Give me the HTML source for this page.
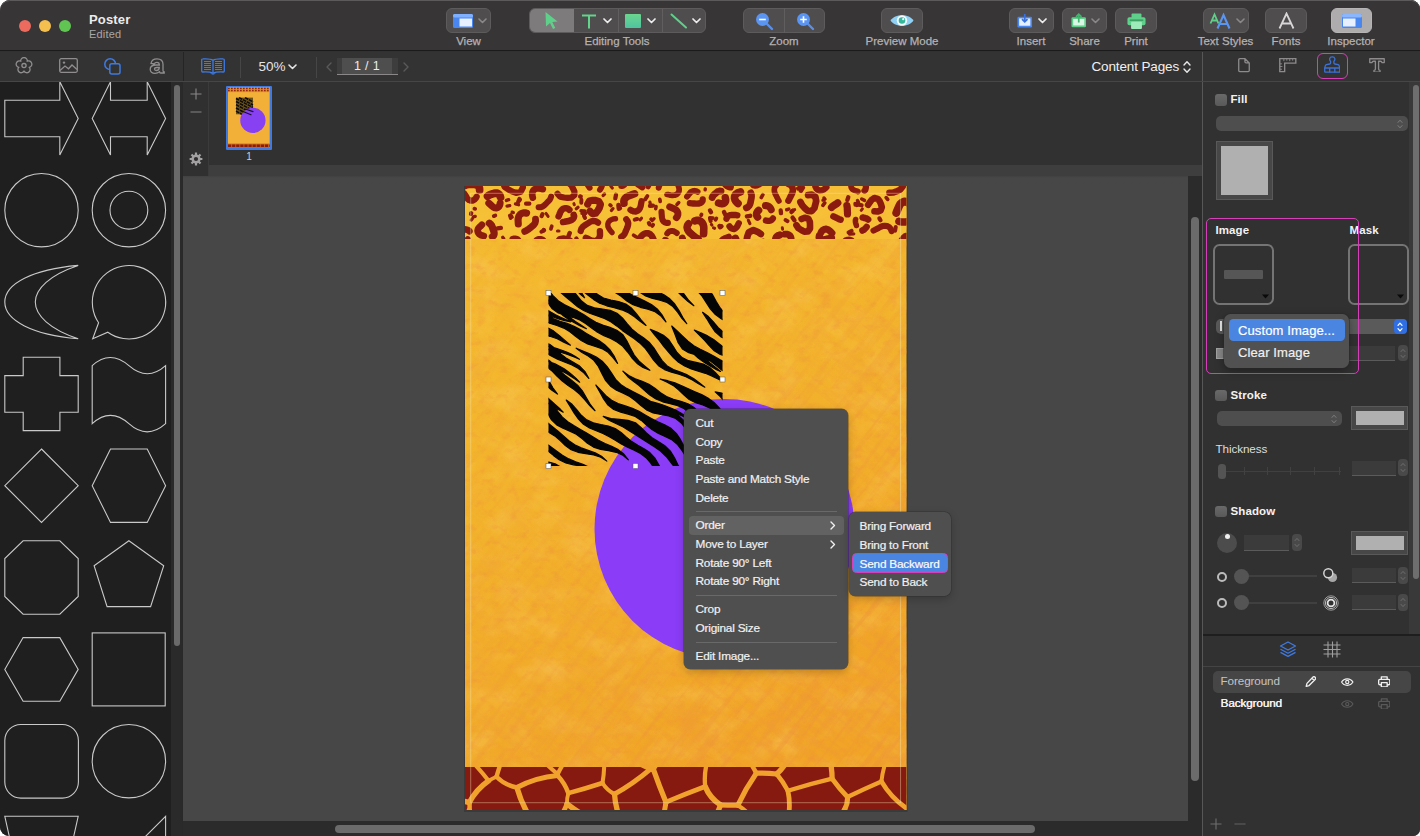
<!DOCTYPE html>
<html><head><meta charset="utf-8"><title>Poster</title>
<style>
*{box-sizing:border-box;margin:0;padding:0}
html,body{width:1420px;height:836px;overflow:hidden;background:#fff;font-family:"Liberation Sans",sans-serif;}
#win{position:absolute;left:0;top:0;width:1420px;height:836px;background:#323132;border-radius:10px 9px 7px 9px;overflow:hidden;}
#win:after{content:"";position:absolute;left:0;top:0;right:0;bottom:0;border-radius:10px 9px 7px 9px;box-shadow:inset 0 1px 0 0 #5c5a5b;pointer-events:none}
.abs{position:absolute}
/* title bar */
#title{position:absolute;left:0;top:0;width:1420px;height:51px;background:#373536;border-bottom:1px solid #1c1b1c}
.tl{position:absolute;top:19.5px;width:12px;height:12px;border-radius:50%}
.tbtn{position:absolute;top:8px;height:25px;background:#4f4d4e;border-radius:6px;border:1px solid #5d5b5c}
.tlabel{position:absolute;top:35px;font-size:11.5px;color:#b4b2b3;text-align:center;white-space:nowrap;transform:translateX(-50%);-webkit-text-stroke:.25px #b4b2b3}
/* second row */
#row2{position:absolute;left:0;top:52px;width:1420px;height:30px;background:#343334;border-bottom:1px solid #474647}
</style></head><body>
<div id="win">
<div id="title">
  <div class="tl" style="left:19px;background:#ec6a5e"></div>
  <div class="tl" style="left:39px;background:#f4bf4f"></div>
  <div class="tl" style="left:59px;background:#61c554"></div>
  <div class="abs" style="left:89px;top:11.6px;font-size:13px;font-weight:bold;color:#ececec;letter-spacing:.15px">Poster</div>
  <div class="abs" style="left:89px;top:28px;font-size:11px;color:#a9a7a8;letter-spacing:.2px">Edited</div>

  <!-- View -->
  <div class="tbtn" style="left:446px;width:45px">
    <svg class="abs" style="left:6px;top:5px" width="20" height="14" viewBox="0 0 20 14"><rect x="0" y="0" width="20" height="14" rx="1.5" fill="#4a86f0"/><rect x="0" y="0" width="20" height="3.5" rx="1.5" fill="#7fb0ff"/><rect x="6.5" y="4.5" width="12.5" height="8" fill="#e8f0ff"/></svg>
    <svg class="abs" style="left:31px;top:9px" width="9" height="6" viewBox="0 0 9 6"><path d="M1 1l3.5 3.5L8 1" fill="none" stroke="#8a8889" stroke-width="1.6" stroke-linecap="round" stroke-linejoin="round"/></svg>
  </div>
  <div class="tlabel" style="left:468.5px">View</div>

  <!-- Editing tools -->
  <div class="tbtn" style="left:529px;width:177px;overflow:hidden">
    <div class="abs" style="left:-1px;top:-1px;width:45px;height:25px;background:#7d7b7c;border-radius:6px 0 0 6px"></div>
    <div class="abs" style="left:88px;top:-1px;width:1px;height:25px;background:#605e5f"></div>
    <div class="abs" style="left:132px;top:-1px;width:1px;height:25px;background:#605e5f"></div>
    <svg class="abs" style="left:14px;top:2px" width="16" height="19" viewBox="0 0 16 19"><path d="M1.5 1 L13.5 10.5 L8.3 11 L11.3 17 L9 18 L6 12 L2 15.5 Z" fill="#5fd08a"/></svg>
    <svg class="abs" style="left:51px;top:5px" width="16" height="15" viewBox="0 0 16 15"><path d="M1 1.5h14M8 1.5v13" fill="none" stroke="#62d48c" stroke-width="2"/></svg>
    <svg class="abs" style="left:73px;top:9px" width="9" height="6" viewBox="0 0 9 6"><path d="M1 1l3.5 3.5L8 1" fill="none" stroke="#eeeeee" stroke-width="1.7" stroke-linecap="round" stroke-linejoin="round"/></svg>
    <div class="abs" style="left:95px;top:5px;width:16px;height:14px;background:linear-gradient(#6bd68f,#4fc3a0);border-radius:1px"></div>
    <svg class="abs" style="left:117px;top:9px" width="9" height="6" viewBox="0 0 9 6"><path d="M1 1l3.5 3.5L8 1" fill="none" stroke="#eeeeee" stroke-width="1.7" stroke-linecap="round" stroke-linejoin="round"/></svg>
    <svg class="abs" style="left:140px;top:4px" width="18" height="16" viewBox="0 0 18 16"><path d="M1.5 1.5L16 14.5" fill="none" stroke="#5fd08a" stroke-width="2" stroke-linecap="round"/></svg>
    <svg class="abs" style="left:162px;top:9px" width="9" height="6" viewBox="0 0 9 6"><path d="M1 1l3.5 3.5L8 1" fill="none" stroke="#eeeeee" stroke-width="1.7" stroke-linecap="round" stroke-linejoin="round"/></svg>
  </div>
  <div class="tlabel" style="left:617px">Editing Tools</div>

  <!-- Zoom -->
  <div class="tbtn" style="left:743px;width:82px">
    <div class="abs" style="left:40px;top:-1px;width:1px;height:25px;background:#605e5f"></div>
    <svg class="abs" style="left:11px;top:3px" width="19" height="19" viewBox="0 0 19 19"><path d="M11 11L17 17" stroke="#5b8fe8" stroke-width="2.4" stroke-linecap="round"/><circle cx="7.5" cy="7.5" r="6.5" fill="#5b95f2"/><path d="M4.2 7.5h6.6" stroke="#fff" stroke-width="1.6"/></svg>
    <svg class="abs" style="left:52px;top:3px" width="19" height="19" viewBox="0 0 19 19"><path d="M11 11L17 17" stroke="#5b8fe8" stroke-width="2.4" stroke-linecap="round"/><circle cx="7.5" cy="7.5" r="6.5" fill="#5b95f2"/><path d="M4.2 7.5h6.6M7.5 4.2v6.6" stroke="#fff" stroke-width="1.6"/></svg>
  </div>
  <div class="tlabel" style="left:784px">Zoom</div>

  <!-- Preview -->
  <div class="tbtn" style="left:881px;width:42px">
    <svg class="abs" style="left:8px;top:4px" width="24" height="15" viewBox="0 0 24 15"><path d="M0.5 7.5C5 0.5 19 0.5 23.5 7.5C19 14.5 5 14.5 0.5 7.5Z" fill="#8fd0f5"/><circle cx="12" cy="7.5" r="5.2" fill="#f4fbff"/><circle cx="12" cy="7.5" r="3.3" fill="#35b59a"/><circle cx="13.2" cy="6.2" r="1.1" fill="#f4fbff"/></svg>
  </div>
  <div class="tlabel" style="left:902px">Preview Mode</div>

  <!-- Insert -->
  <div class="tbtn" style="left:1009px;width:45px">
    <svg class="abs" style="left:7px;top:4.5px" width="15.5" height="14" viewBox="0 0 18 16"><rect x="0.5" y="3" width="17" height="12.5" rx="1.5" fill="#4a86f0"/><rect x="2.5" y="5" width="13" height="8.5" fill="#e4eeff"/><path d="M9 0v8M5.8 5.8L9 9l3.2-3.2" fill="none" stroke="#3a6fe0" stroke-width="2"/></svg>
    <svg class="abs" style="left:27.5px;top:9px" width="9" height="6" viewBox="0 0 9 6"><path d="M1 1l3.5 3.5L8 1" fill="none" stroke="#eeeeee" stroke-width="1.7" stroke-linecap="round" stroke-linejoin="round"/></svg>
  </div>
  <div class="tlabel" style="left:1031px">Insert</div>

  <!-- Share -->
  <div class="tbtn" style="left:1062px;width:45px">
    <svg class="abs" style="left:7.5px;top:4px" width="15.5" height="14.6" viewBox="0 0 18 17"><rect x="0.5" y="5" width="17" height="11.5" rx="1.5" fill="#5fd08a"/><rect x="2.5" y="7" width="13" height="7.5" fill="#d9f7e4"/><path d="M9 11V2M5.8 4.6L9 1.4l3.2 3.2" fill="none" stroke="#3fb56e" stroke-width="2"/></svg>
    <svg class="abs" style="left:27.5px;top:9px" width="9" height="6" viewBox="0 0 9 6"><path d="M1 1l3.5 3.5L8 1" fill="none" stroke="#8a8889" stroke-width="1.6" stroke-linecap="round" stroke-linejoin="round"/></svg>
  </div>
  <div class="tlabel" style="left:1084.5px">Share</div>

  <!-- Print -->
  <div class="tbtn" style="left:1115px;width:42px">
    <svg class="abs" style="left:11px;top:3.5px" width="19" height="16.5" viewBox="0 0 21 18"><rect x="5" y="0.5" width="11" height="5" rx="1" fill="#5fd08a"/><rect x="0.5" y="4.5" width="20" height="9" rx="2" fill="#5fd08a"/><rect x="4.5" y="9.5" width="12" height="8" rx="1" fill="#9cebb8"/><rect x="3" y="7" width="15" height="1.6" fill="#3a9d60"/></svg>
  </div>
  <div class="tlabel" style="left:1136px">Print</div>

  <!-- Text styles -->
  <div class="tbtn" style="left:1203px;width:46px">
    <svg class="abs" style="left:5px;top:3px" width="24" height="18" viewBox="0 0 24 18"><path d="M1.5 11.5L5.5 2.5L9.5 11.5M3 8.5h5" fill="none" stroke="#5fd08a" stroke-width="1.8"/><path d="M8.5 16.5L14.5 3L20.5 16.5M10.8 12h7.4" fill="none" stroke="#5b95f2" stroke-width="2.1"/></svg>
    <svg class="abs" style="left:32px;top:9px" width="9" height="6" viewBox="0 0 9 6"><path d="M1 1l3.5 3.5L8 1" fill="none" stroke="#8a8889" stroke-width="1.6" stroke-linecap="round" stroke-linejoin="round"/></svg>
  </div>
  <div class="tlabel" style="left:1225.5px">Text Styles</div>

  <!-- Fonts -->
  <div class="tbtn" style="left:1265px;width:42px">
    <svg class="abs" style="left:12px;top:3px" width="17" height="18" viewBox="0 0 17 18"><path d="M1.5 16.5L8.5 1.5L15.5 16.5M4 11.5h9" fill="none" stroke="#d8d6d7" stroke-width="1.8"/></svg>
  </div>
  <div class="tlabel" style="left:1286px">Fonts</div>

  <!-- Inspector -->
  <div class="tbtn" style="left:1331px;width:41px;background:#aeacad;border-color:#b6b4b5">
    <svg class="abs" style="left:10px;top:5px" width="20" height="14" viewBox="0 0 20 14"><rect x="0" y="0" width="20" height="14" rx="1.5" fill="#4a86f0"/><rect x="0" y="0" width="20" height="3.5" rx="1.5" fill="#8ab6ff"/><rect x="1" y="4.5" width="12.5" height="8" fill="#e8f0ff"/></svg>
  </div>
  <div class="tlabel" style="left:1351px">Inspector</div>
</div>

<div id="row2">
  <!-- left tabs -->
  <svg class="abs" style="left:15px;top:5px" width="18" height="17" viewBox="0 0 18 17"><g fill="none" stroke="#8f8d8e" stroke-width="1.3"><path d="M5.71 4.07A3.3 3.3 0 1 1 12.29 4.07A3.3 3.3 0 1 1 14.33 10.33A3.3 3.3 0 1 1 9.00 14.20A3.3 3.3 0 1 1 3.67 10.33A3.3 3.3 0 1 1 5.71 4.07Z"/><circle cx="9" cy="8.6" r="2.1"/></g></svg>
  <svg class="abs" style="left:59px;top:6px" width="19" height="15" viewBox="0 0 19 15"><g fill="none" stroke="#8f8d8e" stroke-width="1.3"><rect x=".7" y=".7" width="17.6" height="13.6" rx="1.5"/><path d="M1 12.5l5-4.5 3.5 2.8 3.5-3.8 5 4.5"/><circle cx="5" cy="4.6" r="1.2" fill="#8f8d8e" stroke="none"/></g></svg>
  <svg class="abs" style="left:104px;top:6px" width="17" height="17" viewBox="0 0 17 17"><g fill="none" stroke="#3f7ae0" stroke-width="1.5"><circle cx="6.2" cy="6.2" r="5.4"/><rect x="5.8" y="5.8" width="10.2" height="10.2" rx="2" fill="#343334"/></g></svg>
  <svg class="abs" style="left:149px;top:6px" width="16" height="16" viewBox="0 0 16 16"><g fill="none" stroke="#8f8d8e" stroke-width="1.3"><path d="M2 5.5C2.5 2 5 .8 8 .8c4 0 6 2 6 5.500000000000001V12.5c0 1.2 .5 1.500000000000001 1.2 1.500000000000001V15h-3.5c-.8 0 -1.2 -.5 -1.2 -1.200000000000001C9 15 7.5 15.300000000000001 6 15.300000000000001c-3 0 -4.8 -1.500000000000001 -4.8 -4c0 -3 2.5 -4.300000000000001 6 -4.300000000000001h3.200000000000001c0 -2 -1 -2.7 -2.500000000000001 -2.7c-1.5 0 -2.300000000000001 .6 -2.500000000000001 1.700000000000001Z"/><path d="M10.3 9.5H8c-1.500000000000001 0 -2.500000000000001 .5 -2.500000000000001 1.500000000000001s.8 1.500000000000001 1.800000000000001 1.500000000000001c1.800000000000001 0 3 -1 3 -3Z"/></g></svg>
  <div class="abs" style="left:183px;top:0;width:1px;height:29px;background:#262526"></div>
  <!-- book icon -->
  <svg class="abs" style="left:201px;top:6px" width="24" height="17" viewBox="0 0 24 17"><g fill="none" stroke="#3f7ae0" stroke-width="1.3"><path d="M12 2.2C10 .9 5 .7 1.700000000000001 .9C1 .9 .7 1.2 .7 1.9V13c0 .6 .4 1 1 1c3.500000000000001 -.2 7.300000000000001 -.2 10.3 1.2c3 -1.400000000000001 6.800000000000001 -1.400000000000001 10.3 -1.2c.6 0 1 -.4 1 -1V1.9c0 -.7 -.3 -1 -1 -1C19 .7 14 .9 12 2.2Z"/><path d="M12 2.2V15"/></g><g stroke="#3f7ae0" stroke-width="1"><path d="M3 3.5h7M3 5.5h7M3 7.5h7M3 9.5h7M3 11.5h7M14 3.5h7M14 5.5h7M14 7.5h7M14 9.5h7M14 11.5h7"/></g><path d="M9 15.600000000000001h6l-3 1.2z" fill="#3f7ae0"/></svg>
  <div class="abs" style="left:240px;top:5px;width:1px;height:21px;background:#474647"></div>
  <div class="abs" style="left:258.5px;top:7px;font-size:13.5px;color:#e6e6e6;letter-spacing:0">50%</div>
  <svg class="abs" style="left:288px;top:12px" width="9" height="6" viewBox="0 0 9 6"><path d="M1 1l3.5 3.5L8 1" fill="none" stroke="#e6e6e6" stroke-width="1.6" stroke-linecap="round" stroke-linejoin="round"/></svg>
  <div class="abs" style="left:316px;top:5px;width:1px;height:21px;background:#474647"></div>
  <svg class="abs" style="left:326px;top:10px" width="6" height="10" viewBox="0 0 6 10"><path d="M5 1L1 5l4 4" fill="none" stroke="#5a5859" stroke-width="1.4" stroke-linecap="round" stroke-linejoin="round"/></svg>
  <div class="abs" style="left:337px;top:6px;width:61px;height:17px;background:#3e3d3e;border-bottom:1px solid #8a8889"></div>
  <div class="abs" style="left:342px;top:6px;width:50px;height:16px;background:#4f4e4f;color:#ececec;font-size:12.5px;text-align:center;line-height:17px;letter-spacing:.3px">1 / 1</div>
  <svg class="abs" style="left:403px;top:10px" width="6" height="10" viewBox="0 0 6 10"><path d="M1 1l4 4-4 4" fill="none" stroke="#5a5859" stroke-width="1.4" stroke-linecap="round" stroke-linejoin="round"/></svg>

  <div class="abs" style="left:1091.5px;top:6.5px;font-size:13.5px;color:#f0f0f0;letter-spacing:-.14px">Content Pages</div>
  <svg class="abs" style="left:1182.5px;top:8px" width="8" height="14" viewBox="0 0 8 14"><path d="M1 5l3-3.2L7 5M1 9l3 3.2L7 9" fill="none" stroke="#e8e8e8" stroke-width="1.4" stroke-linecap="round" stroke-linejoin="round"/></svg>

  <div class="abs" style="left:1202px;top:0;width:1px;height:29px;background:#585758"></div>
  <!-- inspector tabs -->
  <svg class="abs" style="left:1237.5px;top:6.2px" width="12" height="14.4" viewBox="0 0 13 16" preserveAspectRatio="none"><path d="M2 .8h5.5l4.7 4.7V14c0 .7 -.5 1.2 -1.2 1.2H2c-.7 0 -1.2 -.5 -1.2 -1.2V2c0 -.7 .5 -1.2 1.2 -1.2Z M7.5 .8v3.5c0 .7 .5 1.2 1.2 1.2h3.5" fill="none" stroke="#8d8b8c" stroke-width="1.4"/></svg>
  <svg class="abs" style="left:1279px;top:6.2px" width="17.6" height="14.4" viewBox="0 0 18 16" preserveAspectRatio="none"><path d="M.8 .8h16.4v5h-11.4v9.4h-5Z" fill="none" stroke="#8d8b8c" stroke-width="1.4"/><path d="M5 1v2.5M8 1v2M11 1v2.5M14 1v2M1 6.5h2M1 9.5h2.5M1 12.5h2" stroke="#8d8b8c" stroke-width="1"/></svg>
  <div class="abs" style="left:1316.5px;top:.5px;width:31.5px;height:26.5px;border:1.5px solid #d63fb9;border-radius:6px"></div>
  <svg class="abs" style="left:1323.8px;top:4.3px" width="16.5" height="17" viewBox="0 0 16.5 17"><g fill="none" stroke="#3b72d6" stroke-width="1.3" stroke-linejoin="round"><path d="M6.6 5.2C5.2 4.3 5 .8 8.25 .8S11.3 4.3 9.9 5.2V7c0 .6 .3 .9 .9 1l3.2 .7c.7 .2 1 .5 1.200000000000001 1.2L15.8 12H.7l.6-2.100000000000001c.2-.7 .5-1 1.200000000000001-1.2L5.7 8c.6-.1 .9-.4 .9-1Z"/><path d="M.7 12v3.6c0 .4 .2 .6 .6 .6h13.9c.4 0 .6-.2 .6-.6V12"/><path d="M5.7 12v4.2M10.8 12v4.2"/></g></svg>
  <svg class="abs" style="left:1368.9px;top:5.7px" width="16" height="14.8" viewBox="0 0 17 16" preserveAspectRatio="none"><path d="M.8 .8h15.4v4.2h-2.5c0 -1 -.5 -1.5 -1.5 -1.5h-2v8.7c0 .8 .5 1.2 1.5 1.2v1.8h-6.4v-1.8c1 0 1.5 -.4 1.5 -1.2V3.5h-2c-1 0 -1.5 .5 -1.5 1.5H.8Z" fill="none" stroke="#8d8b8c" stroke-width="1.4" stroke-linejoin="round"/></svg>
</div>

<div class="abs" style="left:0;top:82px;width:183px;height:754px;background:#201f20;overflow:hidden">
<svg class="abs" style="left:0;top:0" width="171" height="754" viewBox="0 82 171 754"><g fill="none" stroke="#c9c9c9" stroke-width="1.1" stroke-linejoin="miter"><path transform="translate(4.8 81.7)" d="M0,18.5H55V0L73.4,36.7L55,73.4V55H0Z" /><path transform="translate(92.2 81.7)" d="M0,36.7L18.3,0V18.5H55V0L73.4,36.7L55,73.4V55H18.3V73.4Z" /><circle cx="41.5" cy="210.2" r="36.7"/><circle cx="128.9" cy="210.2" r="36.7"/><circle cx="128.9" cy="210.2" r="18.9"/><path transform="translate(4.8 265.4)" d="M73.4,0C28,4 0,18 0,36.7C0,55.4 28,69.4 73.4,73.4C45,64 30.5,50 30.5,36.7C30.5,23.4 45,9.4 73.4,0Z" /><path transform="translate(92.2 265.4)" d="M6.4,57.4A36.7,36.7 0 1 1 15.6,66.8L0.5,73.4Z" /><path transform="translate(4.8 357.2)" d="M18.4,0H55.1V18.4H73.4V55.1H55.1V73.4H18.4V55.1H0V18.4H18.4Z" /><path transform="translate(92.2 357.2)" d="M0,8.5C12,-2.5 24,-2.5 36.7,8.5S61,19.5 73.4,8.5V66.5C61,77.5 49,77.5 36.7,66.5S12,55.5 0,66.5Z" /><path transform="translate(4.8 449.0)" d="M36.7,0L73.4,36.7L36.7,73.4L0,36.7Z" /><path transform="translate(92.2 449.0)" d="M0,36.7L18.3,0H55L73.4,36.7L55,73.4H18.3Z" /><path transform="translate(4.8 540.8)" d="M18.3,0H55L73.4,17.8V55.6L55,73.4H18.3L0,55.6V17.8Z" /><path transform="translate(92.2 540.8)" d="M36.7,0L71.5,24.9L58.4,65.8H14.9L1.9,24.9Z" /><path transform="translate(4.8 632.7)" d="M0,36.7L18.3,4.9H55L73.4,36.7L55,68.5H18.3Z" /><rect x="92.2" y="632.9" width="73" height="73"/><rect x="4.8" y="724.5" width="73.6" height="73.6" rx="16" ry="16"/><circle cx="128.9" cy="761.2" r="36.7"/><path transform="translate(4.8 816.3)" d="M0,0H73.4L57,73.4H16.4Z" /><path transform="translate(92.2 816.3)" d="M73.4,0V73.4H0Z" /></g></svg>
<div class="abs" style="left:171px;top:0;width:11px;height:754px;background:#2b2a2b"></div>
<div class="abs" style="left:174.3px;top:3px;width:6px;height:561px;background:#6b6a6b;border-radius:3px"></div>
<div class="abs" style="left:182px;top:0;width:1px;height:754px;background:#2a292a"></div>
</div>

<div class="abs" style="left:183px;top:82px;width:1019px;height:94px;background:#323132">
  <div class="abs" style="left:0;top:0;width:26px;height:94px;background:#313031;border-right:1px solid #3c3b3c"></div>
  <svg class="abs" style="left:7px;top:6px" width="12" height="12" viewBox="0 0 12 12"><path d="M6 .5v11M.5 6h11" stroke="#8a8889" stroke-width="1.1"/></svg>
  <svg class="abs" style="left:7px;top:29px" width="12" height="2" viewBox="0 0 12 2"><path d="M.5 1h11" stroke="#858384" stroke-width="1.2"/></svg>
  <svg class="abs" style="left:6px;top:70px" width="14" height="14" viewBox="0 0 14 14"><g fill="#a3a1a2"><circle cx="7" cy="7" r="4.6"/><g stroke="#a3a1a2" stroke-width="2.2"><path d="M7 .6v12.8M.6 7h12.8M2.5 2.5l9 9M11.5 2.5l-9 9"/></g></g><circle cx="7" cy="7" r="2.1" fill="#2f2e2f"/></svg>
  <!-- thumbnail -->
  <div class="abs" style="left:43px;top:3.7px;width:46px;height:64.3px;background:#3f7ae0;border-radius:1px"></div>
  <svg class="abs" style="left:45px;top:5.4px" width="41.7" height="61" viewBox="0 0 41.7 61">
    <rect width="41.7" height="61" fill="#f2b038"/>
    <rect width="41.7" height="5.1" fill="#dc8c2c"/><path d="M0 1.5h41.7M0 3.7h41.7" stroke="#97260f" stroke-width="1.3" stroke-dasharray="1.7 1.3"/>
    <rect y="56.6" width="41.7" height="4.4" fill="#c8661f"/><path d="M0 58.8h41.7" stroke="#8a1c0c" stroke-width="2.6" stroke-dasharray="3.2 .9"/>
    <rect x="8" y="10.6" width="17" height="16.7" fill="#6b5118"/>
    <path d="M8 11.5l17 9M8 14.5l17 9M8 17.700000000000003l17 9M8 21l12 6.3M8 24.2l6 3.1M11 10.6l14 7.4M17 10.6l8 4.2" stroke="#0c0a06" stroke-width="1.5" stroke-dasharray="3.6 .8"/>
    <rect x="0" y="0" width="41.7" height="61" fill="none"/>
    <circle cx="24.9" cy="33.4" r="12.65" fill="#8740f2"/>
    <path d="M15 24.5l8 3.2M18 22.2l7 2.4" stroke="#1a0e30" stroke-width="1.2" stroke-linecap="round"/>
  </svg>
  <div class="abs" style="left:56px;top:69px;width:20px;text-align:center;font-size:10px;color:#cfcdce">1</div>
  <div class="abs" style="left:26px;top:83px;width:993px;height:11px;background:#3f3e3f"></div>
</div>

<div class="abs" style="left:183px;top:176px;width:1019px;height:660px;background:#474747;overflow:hidden"></div>
<div class="abs" style="left:183px;top:176px;width:1019px;height:2px;background:linear-gradient(#414141,#474747)"></div>
<div class="abs" style="left:1188px;top:176px;width:14px;height:660px;background:#2b2b2b"></div>
<div class="abs" style="left:1191px;top:217px;width:8px;height:564px;background:#6b6b6b;border-radius:4px"></div>
<div class="abs" style="left:183px;top:821px;width:1019px;height:15px;background:#2b2b2b"></div>
<div class="abs" style="left:335px;top:825px;width:700px;height:8px;background:#6b6b6b;border-radius:4px"></div>
<svg class="abs" style="left:465px;top:186px;overflow:visible" width="441.5" height="624" viewBox="0 0 441.5 624">
<defs>
<filter id="grain" x="0" y="0" width="100%" height="100%"><feTurbulence type="fractalNoise" baseFrequency="0.03 0.04" numOctaves="5" seed="7"/><feColorMatrix type="matrix" values="0 0 0 0 0.90  0 0 0 0 0.42  0 0 0 0 0.06  2.6 0 0 0 -1.08"/></filter>
<filter id="grain2" x="0" y="0" width="100%" height="100%"><feTurbulence type="fractalNoise" baseFrequency="0.09 0.13" numOctaves="3" seed="21"/><feColorMatrix type="matrix" values="0 0 0 0 0.86  0 0 0 0 0.30  0 0 0 0 0.04  0 3.2 0 0 -1.75"/></filter>
<filter id="grain3" x="0" y="0" width="100%" height="100%"><feTurbulence type="fractalNoise" baseFrequency="0.03 0.04" numOctaves="4" seed="33"/><feColorMatrix type="matrix" values="0 0 0 0 1  0 0 0 0 0.80  0 0 0 0 0.25  0 0 2.4 0 -1.1"/></filter>
<clipPath id="cLeo"><rect x="0" y="0" width="441.5" height="53"/></clipPath>
<clipPath id="cGir"><rect x="0" y="0" width="441.5" height="43"/></clipPath>
<clipPath id="cTig"><rect x="0" y="0" width="174" height="173"/></clipPath>
<clipPath id="cPoster"><rect x="0" y="0" width="441.5" height="624"/></clipPath>
</defs>
<rect x="-1" y="0" width="443.5" height="626" fill="#000" opacity=".18"/>
<linearGradient id="pg" x1="0" y1="0" x2=".35" y2="1"><stop offset="0" stop-color="#f5bc31"/><stop offset=".45" stop-color="#f3b42c"/><stop offset="1" stop-color="#f1a427"/></linearGradient>
<linearGradient id="mg" x1="0" y1="0" x2=".7" y2="1"><stop offset="0" stop-color="#fff" stop-opacity=".15"/><stop offset=".45" stop-color="#fff" stop-opacity=".35"/><stop offset="1" stop-color="#fff" stop-opacity="1"/></linearGradient>
<mask id="mk"><rect x="0" y="0" width="441.5" height="624" fill="url(#mg)"/></mask>
<filter id="scr" x="0" y="0" width="100%" height="100%"><feTurbulence type="fractalNoise" baseFrequency="0.012 0.16" numOctaves="3" seed="5"/><feColorMatrix type="matrix" values="0 0 0 0 0.85  0 0 0 0 0.30  0 0 0 0 0.04  4.6 0 0 0 -2.2"/></filter>
<rect x="0" y="0" width="441.5" height="624" fill="url(#pg)"/>
<rect x="0" y="0" width="441.5" height="624" filter="url(#grain)" opacity=".28"/><rect x="0" y="0" width="441.5" height="624" filter="url(#grain3)" opacity=".2"/><rect x="0" y="0" width="441.5" height="624" filter="url(#grain2)" opacity=".4"/>
<g mask="url(#mk)" clip-path="url(#cPoster)"><g transform="rotate(-52 220 312)"><rect x="-200" y="-200" width="900" height="1100" filter="url(#scr)" opacity=".42"/></g><g transform="rotate(38 220 312)"><rect x="-200" y="-200" width="900" height="1100" filter="url(#scr)" opacity=".22"/></g></g>
<g clip-path="url(#cLeo)"><rect x="0" y="0" width="441.5" height="53" fill="#f7c338" opacity=".75"/><g fill="none" stroke="#8b1a0f" stroke-linecap="round" stroke-linejoin="round"><path d="M108.7 28.8L109.1 30.2L108.8 31.6L107.9 32.9L106.6 33.9L105.1 34.6L103.7 34.9L102.3 35.2L101.0 35.5L99.6 35.8L98.1 36.0" stroke-width="6.6"/><path d="M93.6 30.3L94.2 29.0L94.7 27.8L95.2 26.5L95.8 25.2L96.8 23.9L98.1 22.8L99.8 22.2L101.6 22.3L103.2 22.9L104.4 23.8" stroke-width="6.5"/><path d="M261.5 32.7L262.0 31.3L262.8 30.2L264.0 29.5L265.3 29.1L266.5 29.0L267.6 29.0L268.7 29.0L269.8 28.9L271.0 29.0L272.3 29.3" stroke-width="6.4"/><path d="M273.8 37.2L273.3 38.2L272.8 39.3L272.2 40.4L271.4 41.5L270.3 42.5L269.0 43.0L267.7 42.9L266.4 42.4L265.3 41.4L264.5 40.3" stroke-width="6.3"/><path d="M-1.3 43.0L-0.8 43.2L-0.2 43.3L0.3 43.4L0.9 43.5L1.5 43.6L2.1 43.8L2.7 44.0L3.4 44.3L3.9 44.7L4.4 45.2" stroke-width="6.6"/><path d="M2.8 53.2L2.4 53.7L2.0 54.3L1.5 54.8L1.1 55.4L0.6 55.9L0.1 56.5L-0.5 57.0L-1.2 57.5L-1.9 57.9L-2.7 58.1" stroke-width="6.1"/><path d="M-7.4 53.1L-7.6 52.4L-7.8 51.7L-7.9 51.0L-8.1 50.3L-8.3 49.5L-8.4 48.7L-8.4 47.8L-8.3 46.9L-8.1 46.0L-7.7 45.1" stroke-width="7.0"/><path d="M93.6 67.9L92.6 64.2L92.3 60.8L92.5 57.0L94.9 53.5L98.9 52.8L102.0 53.9L105.1 55.1L107.6 57.9L107.1 62.0L104.3 65.0" stroke-width="7.1"/><path d="M366.6 21.3L367.2 20.7L367.8 20.2L368.5 19.7L369.1 19.3L369.7 18.9L370.3 18.6L370.9 18.2L371.5 17.8L372.1 17.3L372.7 16.9" stroke-width="7.4"/><path d="M381.9 19.6L382.1 20.5L382.2 21.4L382.3 22.3L382.3 23.1L382.3 23.8L382.4 24.6L382.4 25.4L382.5 26.2L382.5 27.0L382.5 27.9" stroke-width="7.2"/><path d="M375.6 33.7L374.7 33.4L373.9 33.1L373.2 32.8L372.5 32.4L371.9 32.1L371.2 31.8L370.5 31.4L369.9 31.1L369.2 30.8L368.4 30.4" stroke-width="6.5"/><path d="M53.3 37.9L53.2 36.4L53.1 35.0L53.1 33.4L53.4 31.7L54.0 29.9L55.2 28.4L56.7 27.3L58.4 26.8L60.1 26.8L61.6 27.2" stroke-width="7.1"/><path d="M70.5 33.2L70.6 35.0L70.1 36.9L69.1 38.5L67.8 39.8L66.5 40.8L65.3 41.8L64.1 42.7L62.8 43.7L61.3 44.7L59.7 45.4" stroke-width="6.8"/><path d="M229.9 34.9L231.5 34.4L233.5 34.4L235.5 35.2L237.1 36.6L238.2 38.6L238.7 40.7L238.8 42.6L238.7 44.3L238.7 46.0L238.6 47.8" stroke-width="7.6"/><path d="M233.1 52.7L231.1 51.9L229.5 50.6L228.0 49.4L226.6 48.2L225.1 47.0L223.6 45.4L222.5 43.5L222.0 41.3L222.5 39.2L223.6 37.7" stroke-width="7.4"/><path d="M24.3 37.2L25.7 38.3L26.7 39.7L27.3 41.1L27.8 42.4L28.2 43.6L28.7 45.0L29.1 46.4L29.1 48.0L28.6 49.5L27.4 50.6" stroke-width="7.2"/><path d="M18.8 50.0L17.3 49.6L15.6 49.0L14.0 47.9L13.0 46.4L12.6 44.7L13.0 43.1L13.8 41.8L14.9 40.7L16.0 39.8L16.9 38.8" stroke-width="6.7"/><path d="M124.6 1.7L123.5 0.1L122.5 -1.4L121.4 -3.0L120.3 -4.9L119.6 -7.1L119.6 -9.4L120.3 -11.6L121.7 -13.3L123.5 -14.3L125.5 -14.8" stroke-width="6.0"/><path d="M136.0 -14.8L137.8 -13.5L139.0 -11.5L139.5 -9.2L139.3 -7.0L138.8 -4.9L138.1 -3.1L137.4 -1.5L136.8 0.3L136.0 2.2L134.9 3.9" stroke-width="5.8"/><path d="M311.9 57.8L311.3 56.9L310.9 55.8L310.6 54.7L310.5 53.5L310.7 52.4L311.2 51.3L311.9 50.4L312.8 49.8L313.8 49.3L314.8 49.0" stroke-width="7.1"/><path d="M320.1 48.2L321.2 48.1L322.3 48.2L323.3 48.6L324.4 49.2L325.2 50.0L325.8 51.0L326.1 52.2L326.2 53.4L326.1 54.5L325.9 55.6" stroke-width="6.8"/><path d="M324.1 60.7L323.7 61.6L323.2 62.5L322.5 63.3L321.6 63.9L320.7 64.3L319.6 64.5L318.6 64.4L317.6 64.0L316.7 63.4L315.9 62.8" stroke-width="6.0"/><path d="M392.9 5.5L392.1 5.2L391.3 4.9L390.4 4.6L389.5 4.3L388.5 3.9L387.6 3.3L386.9 2.5L386.3 1.6L386.0 0.4L386.0 -0.7" stroke-width="5.7"/><path d="M389.0 -5.4L389.7 -5.9L390.3 -6.5L390.9 -7.1L391.6 -7.7L392.3 -8.3L393.2 -8.8L394.1 -9.3L395.1 -9.5L396.1 -9.5L397.1 -9.3" stroke-width="5.5"/><path d="M400.3 -4.0L400.4 -3.2L400.5 -2.4L400.6 -1.6L400.8 -0.8L400.9 0.1L400.9 1.0L400.8 2.0L400.6 3.0L400.2 3.9L399.5 4.7" stroke-width="6.3"/><path d="M273.0 17.5L271.9 16.6L270.9 15.4L270.0 14.0L269.5 12.3L269.6 10.6L270.2 9.0L271.4 7.8L272.7 6.9L274.2 6.3L275.5 5.9" stroke-width="7.6"/><path d="M285.8 6.8L286.5 8.6L286.6 10.4L286.4 12.1L286.1 13.6L285.8 15.0L285.5 16.5L285.0 18.2L284.2 19.8L283.0 21.1L281.3 21.9" stroke-width="6.7"/><path d="M159.0 17.3L158.8 15.6L159.1 14.0L160.0 12.5L161.2 11.3L162.7 10.4L164.1 9.8L165.5 9.3L166.8 8.8L168.1 8.3L169.6 7.8" stroke-width="7.5"/><path d="M176.6 15.3L176.2 16.9L176.0 18.4L175.7 20.0L175.1 21.8L174.1 23.5L172.6 24.8L170.7 25.5L168.8 25.4L167.0 24.8L165.5 23.8" stroke-width="6.3"/><path d="M426.0 58.0L425.0 60.0L423.4 61.6L421.4 62.5L419.1 62.7L417.0 62.3L415.1 61.4L413.4 60.3L411.9 59.3L410.4 58.3L408.8 57.3" stroke-width="6.2"/><path d="M408.5 44.6L410.4 43.6L412.1 42.7L413.7 41.9L415.5 40.9L417.5 40.1L419.8 39.7L422.1 40.0L424.2 41.1L425.7 42.9L426.6 45.1" stroke-width="6.1"/><path d="M313.9 14.9L313.0 13.4L312.3 11.9L311.6 10.6L310.9 9.2L310.1 7.7L309.5 5.9L309.3 4.0L309.5 2.0L310.4 0.3L311.6 -1.0" stroke-width="5.7"/><path d="M323.4 -2.0L325.2 -1.2L326.7 0.2L327.6 2.1L327.9 4.3L327.5 6.4L326.7 8.3L325.9 9.9L325.1 11.4L324.3 13.0L323.4 14.7" stroke-width="6.5"/><path d="M260.3 11.8L260.5 12.8L260.7 13.9L260.6 15.1L260.1 16.2L259.3 17.1L258.2 17.6L256.9 17.8L255.7 17.6L254.6 17.3L253.5 17.0" stroke-width="7.5"/><path d="M247.2 11.5L247.6 10.4L248.3 9.4L249.1 8.6L249.9 7.9L250.7 7.3L251.4 6.6L252.3 5.9L253.4 5.3L254.6 5.0L256.0 5.1" stroke-width="6.9"/><path d="M387.8 62.2L387.7 62.9L387.5 63.6L387.4 64.3L387.2 65.0L386.9 65.8L386.5 66.4L386.0 67.0L385.3 67.4L384.6 67.6L383.8 67.6" stroke-width="7.0"/><path d="M379.2 64.1L378.7 63.6L378.2 63.1L377.7 62.5L377.2 61.9L376.8 61.2L376.4 60.4L376.2 59.5L376.1 58.6L376.2 57.8L376.5 57.0" stroke-width="5.6"/><path d="M381.1 54.6L381.7 54.4L382.3 54.2L382.9 54.1L383.6 54.0L384.3 54.0L385.0 54.1L385.8 54.4L386.5 54.8L387.1 55.4L387.6 56.1" stroke-width="6.8"/><path d="M134.9 45.1L135.0 47.1L135.0 49.3L134.4 51.5L133.0 53.5L130.9 54.7L128.5 55.0L126.3 54.5L124.4 53.6L122.7 52.7L120.9 51.8" stroke-width="6.4"/><path d="M115.7 45.0L116.4 42.7L117.8 40.8L119.5 39.5L121.2 38.4L122.8 37.4L124.5 36.3L126.5 35.3L128.7 34.8L131.1 35.3L133.0 36.6" stroke-width="6.3"/><path d="M450.7 26.8L451.1 29.3L450.5 31.8L448.9 33.8L446.8 34.9L444.6 35.4L442.5 35.6L440.6 35.9L438.5 36.1L436.2 36.0L433.9 35.3" stroke-width="7.5"/><path d="M431.3 26.9L432.0 25.0L432.8 23.3L433.5 21.6L434.3 19.7L435.4 17.8L437.2 16.4L439.3 15.6L441.5 15.8L443.6 16.8L445.2 18.4" stroke-width="8.0"/><path d="M11.6 10.7L10.8 12.2L9.5 13.6L7.9 14.5L6.0 14.7L4.2 14.1L2.7 13.0L1.7 11.6L0.9 10.1L0.1 8.8L-0.8 7.5" stroke-width="6.3"/><path d="M0.1 -0.5L1.8 -1.2L3.6 -1.5L5.3 -1.5L6.8 -1.6L8.4 -1.6L10.2 -1.5L12.0 -0.9L13.5 0.3L14.5 2.1L14.6 4.0" stroke-width="7.7"/><path d="M161.3 33.4L162.6 35.1L163.2 37.2L163.0 39.3L162.4 41.3L161.7 43.0L161.0 44.5L160.3 46.2L159.5 48.0L158.1 49.7L156.3 50.9" stroke-width="6.4"/><path d="M147.0 46.6L145.9 45.3L144.8 43.9L143.7 42.3L142.9 40.4L142.8 38.3L143.4 36.2L144.8 34.6L146.7 33.5L148.6 32.9L150.5 32.7" stroke-width="5.4"/><path d="M99.2 -3.1L103.3 -3.3L106.4 -0.7L107.9 2.3L109.4 5.4L109.4 9.2L106.4 11.7L102.4 11.9L99.0 11.5L95.2 10.7L92.5 7.7" stroke-width="6.2"/><path d="M298.1 56.0L294.2 58.8L290.4 60.5L285.8 61.6L282.0 59.1L281.6 54.6L282.3 50.6L283.9 46.3L288.4 44.1L292.6 45.8L295.8 48.0" stroke-width="6.8"/><path d="M86.1 10.6L85.5 12.4L84.6 14.0L83.4 15.3L82.2 16.4L81.2 17.5L80.1 18.6L78.8 19.7L77.3 20.7L75.5 21.3L73.6 21.3" stroke-width="6.0"/><path d="M67.8 11.7L67.4 10.1L67.2 8.4L67.4 6.5L68.1 4.8L69.4 3.4L71.1 2.5L73.0 2.2L74.7 2.4L76.3 2.8L77.8 3.2" stroke-width="6.7"/><path d="M237.7 13.4L237.6 14.8L236.9 16.0L235.6 17.0L234.0 17.5L232.4 17.7L230.9 17.6L229.4 17.5L228.0 17.5L226.5 17.4L224.9 17.2" stroke-width="6.3"/><path d="M222.0 10.6L222.8 9.7L223.4 8.9L224.1 8.1L224.8 7.2L225.6 6.3L226.8 5.5L228.2 5.0L229.7 4.8L231.3 5.1L232.6 5.8" stroke-width="5.9"/><path d="M189.5 62.8L187.8 64.2L185.6 64.8L183.4 64.8L181.4 64.5L179.6 64.2L177.6 64.0L175.5 63.5L173.5 62.4L172.0 60.7L171.4 58.5" stroke-width="5.9"/><path d="M174.8 52.1L175.9 50.7L177.1 49.3L178.8 48.0L180.8 47.2L183.1 47.3L185.2 48.3L186.7 49.8L187.7 51.6L188.4 53.3L189.1 54.9" stroke-width="6.5"/><path d="M366.3 51.6L364.8 52.4L363.3 52.9L361.9 53.2L360.5 53.5L359.0 53.9L357.4 54.0L355.8 53.6L354.7 52.7L354.2 51.4L354.4 50.0" stroke-width="7.4"/><path d="M356.0 46.5L356.7 45.3L357.7 44.2L359.1 43.4L360.7 43.0L362.3 43.3L363.5 43.9L364.5 44.7L365.3 45.4L366.1 46.2L367.0 47.0" stroke-width="6.9"/><path d="M52.0 -13.7L56.1 -11.2L57.6 -6.7L57.8 -2.7L57.9 1.5L55.7 5.7L51.1 6.9L46.9 5.4L43.4 3.5L39.6 1.0L37.9 -3.5" stroke-width="6.2"/><path d="M213.2 -0.5L213.8 1.2L214.2 3.2L214.0 5.2L213.1 7.1L211.5 8.5L209.5 9.2L207.4 9.3L205.5 9.1L203.7 8.7L202.0 8.5" stroke-width="5.7"/><path d="M193.7 1.7L194.1 -0.1L194.9 -1.6L195.9 -3.0L196.9 -4.1L197.9 -5.2L198.9 -6.4L200.0 -7.6L201.3 -8.7L202.9 -9.6L204.8 -9.9" stroke-width="6.0"/><path d="M361.4 1.3L360.1 2.5L358.5 3.6L356.6 4.4L354.5 4.5L352.7 3.8L351.3 2.4L350.4 0.6L350.0 -1.3L349.8 -3.0L349.6 -4.7" stroke-width="6.3"/><path d="M352.4 -13.9L354.3 -14.5L356.2 -14.5L357.9 -14.1L359.4 -13.6L360.8 -13.1L362.3 -12.6L363.8 -12.0L365.3 -11.0L366.6 -9.6L367.2 -7.8" stroke-width="7.5"/><path d="M300.4 19.6L301.2 19.6L302.0 19.7L302.7 19.9L303.4 20.3L304.1 20.7L304.7 21.2L305.2 21.8L305.6 22.4L305.9 23.0L306.2 23.7" stroke-width="7.1"/><path d="M307.9 32.4L307.5 33.0L307.0 33.6L306.4 34.1L305.7 34.5L304.9 34.7L304.0 34.9L303.2 34.9L302.4 34.8L301.6 34.7L300.9 34.5" stroke-width="6.3"/><path d="M292.6 31.1L292.1 30.4L291.7 29.7L291.5 28.9L291.5 28.1L291.6 27.3L291.9 26.6L292.2 25.9L292.7 25.3L293.2 24.7L293.6 24.3" stroke-width="7.4"/><path d="M343.1 9.1L346.8 8.7L350.4 10.9L351.2 15.1L350.3 18.6L349.4 22.1L346.7 25.1L342.7 24.8L339.8 22.2L337.4 19.6L335.4 16.0" stroke-width="6.7"/><path d="M336.6 33.0L339.7 31.7L343.3 32.6L344.9 36.0L345.0 39.2L345.0 42.5L342.9 45.5L339.3 45.6L336.3 44.0L333.5 42.3L331.4 39.2" stroke-width="6.6"/><path d="M422.7 -3.4L424.4 -7.0L428.2 -8.9L431.9 -7.7L434.5 -5.7L437.2 -3.5L437.9 0.3L435.3 3.6L431.8 5.2L428.4 6.6L424.4 6.7" stroke-width="6.5"/><path d="M122.7 18.1L124.6 14.9L127.8 14.2L130.6 14.4L133.7 15.3L135.5 18.4L134.4 21.9L132.8 24.6L130.7 27.3L127.3 27.7L125.0 25.2" stroke-width="7.1"/><path d="M204.7 20.8L206.0 21.4L207.2 22.0L208.5 22.5L209.8 23.2L211.2 24.1L212.3 25.4L212.9 27.0L212.9 28.7L212.4 30.3L211.4 31.6" stroke-width="6.9"/><path d="M202.9 36.9L201.3 36.9L199.8 36.4L198.5 35.4L197.6 34.0L197.2 32.5L196.9 31.1L196.8 29.8L196.7 28.5L196.6 27.2L196.5 25.7" stroke-width="6.1"/><path d="M22.6 10.3L23.8 9.3L25.2 8.7L26.5 8.2L27.7 7.8L29.0 7.4L30.5 7.1L32.2 7.2L33.8 8.1L34.9 9.5L35.5 11.2" stroke-width="7.8"/><path d="M35.1 17.3L34.8 18.9L34.1 20.3L33.0 21.5L31.5 22.0L29.8 21.8L28.3 21.1L27.1 20.1L26.0 19.1L24.9 18.1L23.8 17.1" stroke-width="7.0"/><path d="M403.1 18.8L404.9 16.2L406.6 13.9L409.4 12.0L412.8 12.8L414.8 15.5L415.9 18.1L416.9 21.2L415.7 24.4L412.5 25.6L409.4 25.3" stroke-width="6.5"/><path d="M270.4 52.3L270.9 53.9L270.9 55.6L270.6 57.1L270.3 58.5L270.0 59.9L269.6 61.5L268.8 63.0L267.4 64.3L265.7 64.9L263.9 64.8" stroke-width="7.6"/><path d="M258.9 61.5L257.7 60.5L256.7 59.3L256.1 57.8L256.1 56.1L256.9 54.5L258.1 53.3L259.6 52.5L261.0 51.9L262.4 51.5L263.7 50.9" stroke-width="6.4"/><path d="M448.8 63.2L447.8 63.4L446.7 63.4L445.7 63.4L444.8 63.3L443.9 63.3L443.0 63.2L442.0 63.2L441.1 63.1L440.1 63.0L439.0 62.8" stroke-width="6.2"/><path d="M434.9 57.4L435.3 56.5L435.8 55.7L436.4 55.0L436.9 54.3L437.5 53.7L438.0 53.0L438.5 52.3L439.1 51.6L439.8 50.9L440.6 50.3" stroke-width="6.9"/><path d="M447.8 50.8L448.5 51.5L449.1 52.2L449.6 52.9L450.0 53.5L450.4 54.2L450.8 54.8L451.2 55.5L451.7 56.2L452.1 56.9L452.5 57.7" stroke-width="6.2"/><path d="M296.4 -2.7L295.1 -2.0L293.6 -1.1L292.0 -0.4L290.2 -0.1L288.5 -0.5L287.3 -1.6L286.8 -3.1L286.7 -4.7L287.0 -6.3L287.2 -7.7" stroke-width="5.8"/><path d="M289.7 -13.8L291.3 -14.7L293.0 -15.0L294.5 -14.7L295.8 -14.1L296.9 -13.5L297.9 -12.9L299.0 -12.3L300.1 -11.6L301.1 -10.5L301.6 -9.0" stroke-width="6.6"/><path d="M160.9 -3.8L160.6 -3.3L160.3 -2.7L160.0 -2.2L159.6 -1.7L159.2 -1.2L158.7 -0.8L158.2 -0.4L157.6 -0.2L157.0 -0.1L156.4 -0.1" stroke-width="6.2"/><path d="M152.6 -5.4L152.4 -5.9L152.2 -6.5L152.0 -7.1L151.8 -7.8L151.7 -8.4L151.7 -9.2L151.7 -9.9L151.9 -10.6L152.1 -11.3L152.5 -11.9" stroke-width="6.6"/><path d="M158.3 -13.3L158.7 -13.3L159.2 -13.3L159.7 -13.2L160.2 -13.1L160.7 -13.0L161.2 -12.8L161.7 -12.5L162.1 -12.1L162.5 -11.6L162.8 -11.0" stroke-width="6.0"/><path d="M205.0 62.7L203.8 62.6L202.7 62.2L201.8 61.5L201.0 60.7L200.5 59.7L200.2 58.6L200.1 57.5L200.1 56.4L200.2 55.3L200.4 54.4" stroke-width="7.2"/><path d="M202.2 47.5L202.9 46.6L203.8 45.8L204.9 45.3L206.0 45.0L207.2 44.9L208.3 45.1L209.3 45.5L210.2 46.0L211.1 46.5L211.8 47.1" stroke-width="5.9"/><path d="M217.3 51.9L217.7 53.0L217.8 54.1L217.7 55.3L217.3 56.4L216.7 57.4L215.8 58.3L214.9 59.0L213.9 59.5L213.0 60.0L212.0 60.4" stroke-width="6.7"/><path d="M72.0 54.1L73.6 53.4L75.3 53.3L77.0 53.8L78.3 54.8L79.3 55.9L80.0 57.0L80.7 58.0L81.4 59.1L82.1 60.3L82.5 61.8" stroke-width="6.8"/><path d="M77.2 65.9L75.5 65.9L74.0 65.8L72.4 65.8L70.7 65.7L69.0 65.1L67.6 63.9L67.0 62.4L67.1 60.9L67.7 59.4L68.5 58.3" stroke-width="6.6"/><path d="M49.8 66.1L48.5 65.6L47.3 64.9L46.3 64.2L45.3 63.5L44.3 62.8L43.2 62.0L42.3 60.9L41.7 59.6L41.5 58.1L42.0 56.8" stroke-width="7.6"/><path d="M47.7 53.1L48.8 52.7L50.0 52.6L51.3 52.8L52.5 53.4L53.4 54.4L54.0 55.6L54.3 56.8L54.4 58.0L54.3 59.1L54.3 60.1" stroke-width="6.4"/><path d="M391.4 39.5L391.3 39.0L391.1 38.5L390.9 38.0L390.8 37.4L390.6 36.8L390.5 36.2L390.4 35.6L390.4 34.9L390.4 34.2L390.6 33.5" stroke-width="5.5"/><path d="M397.7 31.5L398.2 31.6L398.7 31.7L399.2 31.9L399.8 32.0L400.3 32.1L400.9 32.3L401.5 32.5L402.0 32.8L402.6 33.1L403.1 33.5" stroke-width="6.6"/><path d="M401.6 40.9L401.3 41.3L400.9 41.7L400.6 42.0L400.2 42.4L399.9 42.8L399.5 43.2L399.0 43.6L398.5 43.9L398.0 44.2L397.4 44.5" stroke-width="6.5"/><path d="M177.3 1.4L176.2 0.7L175.1 -0.0L174.0 -0.7L172.8 -1.5L171.7 -2.6L171.0 -4.1L170.9 -5.7L171.4 -7.2L172.4 -8.4L173.6 -9.2" stroke-width="6.0"/><path d="M179.3 -11.8L181.0 -11.7L182.5 -11.0L183.6 -9.7L184.2 -8.1L184.3 -6.6L184.2 -5.2L184.1 -3.8L184.1 -2.4L183.8 -0.8L183.1 0.7" stroke-width="5.3"/><path d="M265.3 0.9L263.5 0.5L262.0 -0.4L260.8 -1.5L259.8 -2.6L258.9 -3.7L257.9 -4.8L256.9 -6.0L256.2 -7.5L255.8 -9.2L256.1 -11.0" stroke-width="7.2"/><path d="M264.2 -15.0L265.6 -15.3L267.2 -15.5L268.9 -15.3L270.5 -14.7L271.8 -13.6L272.6 -12.0L272.8 -10.4L272.5 -8.8L272.0 -7.3L271.5 -6.0" stroke-width="7.6"/><path d="M148.0 22.6l-1.6 2.0" stroke-width="3.2"/><path d="M186.2 32.9l-0.4 0.3" stroke-width="3.2"/><path d="M182.4 10.0l-2.2 3.3" stroke-width="3.9"/><path d="M285.2 29.8l-3.3 0.6" stroke-width="4.4"/><path d="M145.9 0.3l1.4 1.7" stroke-width="3.1"/><path d="M392.8 18.4l3.8 0.9" stroke-width="4.2"/><path d="M188.2 38.8l-0.9 1.2" stroke-width="3.7"/><path d="M251.4 32.4l-0.8 1.4" stroke-width="3.7"/><path d="M168.6 49.2l2.4 1.6" stroke-width="3.6"/><path d="M92.5 45.0l1.4 0.0" stroke-width="3.2"/><path d="M10.2 30.4l-1.8 0.5" stroke-width="3.4"/><path d="M236.5 28.4l-0.4 0.9" stroke-width="3.8"/><path d="M50.4 17.9l3.2 0.9" stroke-width="3.2"/><path d="M246.4 38.5l0.5 0.6" stroke-width="3.1"/><path d="M116.0 24.8l3.7 0.2" stroke-width="3.4"/><path d="M256.6 40.3l-1.0 0.8" stroke-width="4.2"/><path d="M337.9 1.6l-2.0 3.3" stroke-width="4.4"/><path d="M115.2 10.5l0.5 0.1" stroke-width="4.4"/><path d="M334.5 1.8l-1.3 0.7" stroke-width="4.4"/><path d="M360.2 13.1l-2.4 1.2" stroke-width="3.0"/><path d="M327.8 24.7l-1.4 1.4" stroke-width="4.3"/><path d="M44.6 29.5l1.0 2.9" stroke-width="3.3"/><path d="M383.3 11.3l-1.0 2.8" stroke-width="4.3"/><path d="M240.3 2.9l-0.2 1.0" stroke-width="3.4"/><path d="M79.2 44.3l-2.8 1.4" stroke-width="4.0"/><path d="M430.7 41.0l-0.6 3.6" stroke-width="4.1"/><path d="M188.0 19.7l-3.1 0.2" stroke-width="4.2"/><path d="M359.0 11.9l0.1 1.3" stroke-width="3.5"/><path d="M259.0 26.0l1.5 3.1" stroke-width="4.4"/><path d="M151.0 8.8l-0.7 3.5" stroke-width="4.3"/><path d="M78.6 43.6l-0.1 1.3" stroke-width="3.8"/><path d="M386.7 44.8l-3.2 1.7" stroke-width="3.9"/><path d="M45.9 28.7l1.4 2.5" stroke-width="3.1"/><path d="M108.9 17.6l0.4 1.2" stroke-width="3.0"/><path d="M43.6 13.7l-2.1 0.7" stroke-width="3.5"/><path d="M139.5 8.0l-1.3 1.4" stroke-width="3.4"/><path d="M315.7 24.5l0.3 2.7" stroke-width="4.3"/><path d="M388.7 47.9l-4.0 0.2" stroke-width="3.4"/><path d="M37.8 51.4l0.8 1.1" stroke-width="3.4"/><path d="M391.5 17.8l0.6 1.1" stroke-width="4.3"/><path d="M414.4 32.4l1.1 1.9" stroke-width="4.2"/><path d="M7.3 32.8l-1.0 1.2" stroke-width="3.3"/><path d="M245.1 33.1l0.6 2.0" stroke-width="4.0"/><path d="M61.1 17.6l3.2 0.1" stroke-width="4.3"/><path d="M189.1 32.6l-2.0 2.1" stroke-width="3.2"/><path d="M283.4 34.3l1.5 3.3" stroke-width="3.2"/><path d="M213.8 16.5l-1.9 2.0" stroke-width="3.4"/><path d="M317.3 41.7l0.3 1.5" stroke-width="3.0"/><path d="M244.7 31.7l3.2 0.4" stroke-width="3.6"/><path d="M390.1 17.5l0.1 1.5" stroke-width="3.5"/><path d="M392.5 14.5l0.9 1.6" stroke-width="3.5"/><path d="M191.1 20.5l-0.4 2.3" stroke-width="3.5"/><path d="M47.1 26.1l1.3 0.4" stroke-width="3.2"/><path d="M245.0 24.5l1.0 1.7" stroke-width="4.4"/><path d="M320.5 34.1l2.1 1.1" stroke-width="3.9"/><path d="M55.2 13.8l-1.6 1.4" stroke-width="3.6"/><path d="M35.9 41.9l-3.5 0.4" stroke-width="4.3"/><path d="M172.1 33.0l-2.4 0.7" stroke-width="4.0"/><path d="M397.4 22.9l-1.2 1.5" stroke-width="3.0"/><path d="M145.1 18.9l0.8 0.7" stroke-width="3.8"/><path d="M254.5 40.1l0.5 1.0" stroke-width="4.5"/><path d="M54.4 12.9l-1.3 3.3" stroke-width="4.2"/><path d="M176.5 32.2l-1.5 1.7" stroke-width="3.2"/><path d="M184.9 16.1l0.5 2.4" stroke-width="3.2"/><path d="M297.9 8.7l-1.6 2.8" stroke-width="3.6"/><path d="M329.7 23.6l-2.8 0.8" stroke-width="3.0"/><path d="M119.0 29.8l1.0 2.0" stroke-width="4.1"/><path d="M183.9 37.1l0.8 1.3" stroke-width="4.2"/><path d="M113.0 21.3l-1.7 1.4" stroke-width="3.3"/><path d="M116.4 13.8l-0.1 2.9" stroke-width="3.9"/><path d="M9.4 22.7l0.8 0.1" stroke-width="3.7"/><path d="M117.2 27.2l3.4 0.1" stroke-width="3.8"/><path d="M334.4 1.2l1.5 0.9" stroke-width="3.1"/><path d="M396.7 13.0l2.8 1.4" stroke-width="3.5"/><path d="M154.2 19.8l1.1 2.4" stroke-width="3.8"/><path d="M77.5 28.1l-0.9 2.0" stroke-width="4.2"/><path d="M153.4 19.0l0.4 3.8" stroke-width="4.4"/><path d="M323.7 23.1l-2.0 0.6" stroke-width="3.6"/><path d="M421.1 11.5l1.7 2.0" stroke-width="3.5"/><path d="M104.7 47.0l-1.2 3.3" stroke-width="4.5"/><path d="M86.8 40.2l-0.9 2.7" stroke-width="3.7"/><path d="M194.8 13.4l0.4 2.0" stroke-width="3.7"/><path d="M81.0 27.4l2.1 3.0" stroke-width="3.0"/><path d="M248.5 41.9l1.1 0.4" stroke-width="3.1"/><path d="M327.6 31.6l1.8 2.7" stroke-width="4.4"/><path d="M359.8 16.9l-1.9 2.5" stroke-width="3.7"/><path d="M30.3 29.5l-1.5 0.6" stroke-width="3.9"/><path d="M6.2 27.3l-0.2 0.6" stroke-width="4.3"/><path d="M44.8 19.7l-2.8 0.4" stroke-width="3.2"/><path d="M111.3 52.4l1.4 2.3" stroke-width="4.0"/></g></g>
<g transform="translate(0 581)" clip-path="url(#cGir)"><rect x="0" y="0" width="441.5" height="43" fill="#861910"/><g fill="none" stroke="#f1a22c" stroke-linecap="round"><path d="M139.3 58.6Q119.2 50.2 102.0 36.9" stroke-width="5.5"/><path d="M139.3 58.6Q130.5 71.7 124.2 86.3" stroke-width="4.8"/><path d="M102.0 36.9Q94.9 55.4 78.5 66.6" stroke-width="4.8"/><path d="M200.9 35.1Q199.7 46.5 195.0 56.9" stroke-width="5.0"/><path d="M200.9 35.1Q194.2 18.8 188.4 2.3" stroke-width="5.3"/><path d="M185.1 2.3Q186.7 2.4 188.4 2.3" stroke-width="5.2"/><path d="M185.1 2.3Q168.5 16.4 149.5 27.1" stroke-width="5.0"/><path d="M149.5 27.1Q150.3 39.3 154.7 50.7" stroke-width="5.3"/><path d="M154.7 50.7Q172.1 55.8 188.2 64.1" stroke-width="5.3"/><path d="M188.2 64.1Q192.5 61.3 195.0 56.9" stroke-width="5.0"/><path d="M240.2 19.6Q245.0 31.1 255.5 38.0" stroke-width="5.5"/><path d="M240.2 19.6Q220.4 27.1 200.9 35.1" stroke-width="4.8"/><path d="M255.5 38.0Q251.0 51.3 241.4 61.5" stroke-width="5.3"/><path d="M241.4 61.5Q218.9 52.7 195.0 56.9" stroke-width="4.7"/><path d="M139.3 58.6Q147.5 55.6 154.7 50.7" stroke-width="5.1"/><path d="M323.7 48.0Q308.8 54.8 296.5 65.6" stroke-width="4.1"/><path d="M323.7 48.0Q325.5 35.8 322.9 23.8" stroke-width="4.8"/><path d="M322.9 23.8Q318.2 14.8 311.7 7.0" stroke-width="4.6"/><path d="M311.7 7.0Q301.5 5.8 291.3 6.2" stroke-width="5.2"/><path d="M291.3 6.2Q280.7 21.4 272.8 38.3" stroke-width="5.1"/><path d="M272.8 38.3Q288.7 48.3 296.4 65.6" stroke-width="4.1"/><path d="M272.8 38.3Q264.2 38.4 255.5 38.0" stroke-width="5.0"/><path d="M241.4 61.5Q249.9 75.1 253.1 90.8" stroke-width="5.0"/><path d="M148.5 -17.3Q166.0 -6.0 185.1 2.3" stroke-width="3.9"/><path d="M148.5 -17.3Q143.8 -13.8 139.0 -10.5" stroke-width="4.2"/><path d="M149.5 27.1Q141.9 23.2 137.5 16.0" stroke-width="4.0"/><path d="M139.0 -10.5Q139.8 2.8 137.5 16.0" stroke-width="4.1"/><path d="M102.0 36.9Q101.7 31.4 103.4 26.2" stroke-width="3.9"/><path d="M137.5 16.0Q120.6 21.5 103.4 26.2" stroke-width="4.5"/><path d="M68.3 55.2Q38.9 50.3 9.1 49.6" stroke-width="4.9"/><path d="M68.3 55.2Q57.1 39.3 51.9 20.5" stroke-width="5.4"/><path d="M51.9 20.5Q39.9 18.4 31.5 9.8" stroke-width="4.5"/><path d="M4.3 35.4Q4.9 39.1 4.4 42.9" stroke-width="4.5"/><path d="M4.3 35.4Q11.3 22.2 23.6 13.7" stroke-width="5.3"/><path d="M23.6 13.7Q27.4 11.5 31.5 9.8" stroke-width="3.9"/><path d="M4.4 42.9Q6.5 46.4 9.1 49.6" stroke-width="4.0"/><path d="M21.1 79.6Q15.5 64.4 9.1 49.6" stroke-width="4.4"/><path d="M78.5 66.6Q73.7 60.7 68.3 55.2" stroke-width="5.5"/><path d="M103.4 26.2Q99.8 16.2 92.6 8.5" stroke-width="4.6"/><path d="M92.6 8.5Q71.0 10.4 51.9 20.5" stroke-width="5.0"/><path d="M-8.4 -20.6Q9.1 -4.8 23.6 13.7" stroke-width="4.1"/><path d="M-8.4 -20.6Q-24.9 -11.7 -40.2 -0.8" stroke-width="4.8"/><path d="M-40.2 12.8Q-21.3 30.6 4.3 35.4" stroke-width="5.5"/><path d="M42.2 -20.3Q35.8 -5.6 31.5 9.8" stroke-width="4.4"/><path d="M206.0 -21.6Q221.7 -8.2 241.8 -3.9" stroke-width="3.8"/><path d="M241.8 -3.9Q252.9 -14.9 267.9 -19.3" stroke-width="4.8"/><path d="M271.1 -35.5Q268.9 -27.5 267.9 -19.3" stroke-width="4.1"/><path d="M148.5 -17.3Q151.7 -27.1 153.3 -37.3" stroke-width="5.4"/><path d="M188.4 2.3Q196.3 -10.3 206.0 -21.6" stroke-width="4.6"/><path d="M240.2 19.6Q238.9 7.7 241.8 -3.9" stroke-width="4.3"/><path d="M291.3 6.2Q283.5 -10.1 267.9 -19.3" stroke-width="4.5"/><path d="M311.7 7.0Q322.5 -2.7 326.4 -16.8" stroke-width="5.4"/><path d="M326.4 -16.8Q322.9 -25.0 318.5 -32.7" stroke-width="4.3"/><path d="M420.7 -17.1Q391.2 -25.7 362.0 -16.2" stroke-width="4.7"/><path d="M420.7 -17.1Q420.6 -19.6 420.7 -22.1" stroke-width="4.4"/><path d="M362.8 -26.4Q360.6 -22.3 361.1 -17.6" stroke-width="4.7"/><path d="M362.0 -16.2Q361.5 -16.8 361.1 -17.6" stroke-width="4.7"/><path d="M326.4 -16.8Q343.6 -21.4 361.1 -17.6" stroke-width="4.9"/><path d="M322.9 23.8Q344.8 17.0 367.1 11.7" stroke-width="4.3"/><path d="M367.1 11.7Q367.1 -2.7 362.0 -16.2" stroke-width="5.3"/><path d="M4.4 42.9Q-5.9 58.2 -23.1 65.0" stroke-width="4.8"/><path d="M104.7 -37.0Q109.2 -28.3 111.0 -18.6" stroke-width="5.5"/><path d="M111.0 -18.6Q99.5 -7.4 92.7 7.1" stroke-width="4.2"/><path d="M92.7 7.1Q73.8 -8.2 60.3 -28.4" stroke-width="4.1"/><path d="M139.0 -10.5Q126.3 -18.9 111.0 -18.6" stroke-width="4.3"/><path d="M92.6 8.5Q92.7 7.8 92.7 7.1" stroke-width="4.7"/><path d="M367.1 11.7Q374.0 21.5 382.5 29.9" stroke-width="4.9"/><path d="M423.2 -11.1Q417.8 1.1 416.4 14.4" stroke-width="4.0"/><path d="M423.2 -11.1Q422.5 -14.3 420.7 -17.1" stroke-width="4.3"/><path d="M416.4 14.4Q399.3 21.8 382.5 29.9" stroke-width="4.4"/><path d="M453.5 76.9Q448.0 62.7 446.2 47.5" stroke-width="4.8"/><path d="M495.3 52.8Q470.7 50.7 446.2 47.5" stroke-width="4.4"/><path d="M379.4 42.8Q390.9 59.1 406.9 71.2" stroke-width="4.9"/><path d="M379.4 42.8Q369.8 56.0 354.6 61.9" stroke-width="4.3"/><path d="M354.6 61.9Q354.9 67.9 354.8 74.0" stroke-width="5.4"/><path d="M416.4 14.4Q426.8 32.2 444.3 43.1" stroke-width="4.8"/><path d="M382.5 29.9Q383.0 36.8 379.4 42.8" stroke-width="5.2"/><path d="M444.3 43.1Q444.6 44.5 444.8 46.0" stroke-width="4.8"/><path d="M444.8 46.0Q424.2 56.0 406.9 71.2" stroke-width="4.9"/><path d="M323.7 48.0Q339.2 54.8 354.6 61.9" stroke-width="5.4"/><path d="M446.2 47.5Q445.5 46.8 444.8 46.0" stroke-width="4.5"/><path d="M444.3 43.1Q463.6 29.8 475.3 9.5" stroke-width="4.2"/><path d="M423.2 -11.1Q448.7 -12.6 473.7 -7.4" stroke-width="5.3"/></g></g>
<circle cx="259.5" cy="343" r="130" fill="#8a3cf6"/>
<g transform="translate(83.5 107)" clip-path="url(#cTig)"><path fill="#050505" stroke="#050505" stroke-width="1.2" stroke-linejoin="round" d="M103.3 -119.1L107.7 -117.5L111.7 -115.5L115.6 -113.2L119.2 -110.6L122.6 -107.8L126.0 -104.8L129.2 -101.7L132.2 -98.3L132.2 -98.3L128.4 -100.5L124.6 -103.0L120.9 -105.3L117.0 -107.6L113.0 -109.7L108.9 -111.5L104.5 -113.1L99.8 -114.2ZM211.7 -13.4L214.8 -11.8L217.6 -9.9L220.5 -8.0L223.4 -6.2L226.3 -4.4L229.3 -2.7L232.3 -1.0L235.2 0.8L235.2 0.8L231.5 0.1L228.0 -0.9L224.6 -2.1L221.3 -3.4L218.1 -4.7L214.9 -6.1L211.7 -7.6L208.4 -8.8ZM390.9 114.3L394.7 116.9L398.3 119.8L401.8 122.7L405.5 125.5L409.2 128.2L413.0 130.7L416.9 133.1L420.8 135.5L420.8 135.5L416.1 134.2L411.7 132.5L407.4 130.6L403.3 128.4L399.3 126.1L395.4 123.7L391.5 121.3L387.5 119.1ZM97.7 -78.6L100.0 -73.5L102.6 -68.8L105.3 -64.2L108.1 -59.9L111.0 -55.7L114.2 -51.7L117.5 -48.0L120.9 -44.4L120.9 -44.4L116.9 -47.3L113.3 -50.5L109.9 -54.1L106.6 -57.9L103.6 -61.9L100.7 -66.2L97.9 -70.6L95.3 -75.3ZM162.7 -34.4L169.5 -31.6L175.6 -27.9L180.7 -22.8L185.9 -17.8L191.3 -13.0L196.4 -7.8L201.1 -2.2L205.7 3.7L210.7 8.9L216.1 13.6L222.3 17.3L229.0 20.3L235.4 23.6L235.4 23.6L227.3 22.5L219.3 21.4L212.2 19.0L206.5 14.7L202.2 8.4L197.9 2.2L192.9 -3.0L187.0 -7.1L181.0 -11.0L175.4 -15.5L170.7 -21.1L167.0 -28.2L162.7 -34.4ZM199.7 -1.3L204.6 1.9L209.4 5.2L214.3 8.2L219.5 10.9L224.9 13.4L230.4 15.7L236.0 17.8L241.6 20.0L241.6 20.0L235.3 18.7L229.3 17.2L223.4 15.4L217.7 13.4L212.2 11.1L207.0 8.4L201.9 5.6L196.8 2.7ZM39.1 -98.8L45.8 -96.0L53.1 -93.9L60.5 -92.1L67.4 -89.5L73.1 -85.3L77.7 -79.5L81.8 -73.2L86.4 -67.4L91.7 -62.7L97.6 -58.7L103.5 -54.8L109.1 -50.4L114.4 -45.7L119.9 -41.2L126.2 -37.8L133.1 -35.3L140.4 -33.2L147.2 -30.5L153.2 -26.7L158.5 -22.0L163.6 -16.9L168.8 -12.0L174.1 -7.2L179.2 -2.3L183.9 3.4L188.1 9.6L192.4 15.8L197.4 20.9L203.4 24.8L210.1 27.6L210.1 27.6L202.7 25.7L196.3 22.5L191.2 17.5L186.8 11.5L182.4 5.5L177.2 0.5L171.3 -3.4L165.2 -7.0L159.5 -11.3L154.5 -16.4L149.5 -21.7L143.9 -26.0L137.1 -28.7L129.5 -30.2L121.7 -31.6L114.8 -34.1L109.0 -38.3L104.2 -43.7L99.4 -49.1L94.2 -54.0L88.5 -58.3L83.0 -62.8L78.1 -68.1L73.9 -74.3L69.6 -80.5L64.7 -85.8L58.7 -89.7L52.0 -92.5L45.2 -95.2L39.1 -98.8ZM262.9 56.6L266.3 58.5L269.5 60.7L272.6 63.2L275.6 65.6L278.6 68.1L281.6 70.6L284.6 73.1L287.6 75.6L287.6 75.6L284.0 73.9L280.7 71.9L277.4 69.8L274.1 67.7L270.8 65.6L267.5 63.5L264.1 61.6L260.5 60.0ZM70.9 -61.1L75.3 -57.9L79.5 -54.4L83.7 -51.0L88.0 -47.7L92.5 -44.6L97.2 -41.7L102.0 -39.1L107.0 -36.6L107.0 -36.6L101.5 -38.3L96.3 -40.4L91.3 -42.8L86.5 -45.5L81.9 -48.5L77.4 -51.6L73.0 -54.8L68.4 -57.7ZM113.5 -27.1L120.8 -25.0L127.1 -21.5L133.3 -17.7L139.9 -14.6L146.7 -11.8L153.4 -8.8L159.2 -4.5L163.8 1.4L167.6 8.3L171.7 15.0L176.6 20.4L182.7 24.3L189.2 27.5L195.7 30.8L201.9 34.5L207.9 38.4L214.3 41.9L221.1 44.8L228.1 47.4L234.5 50.7L240.2 55.1L245.1 60.6L249.8 66.4L254.6 72.0L259.8 77.0L265.1 82.0L270.1 87.3L274.9 92.9L279.8 98.4L285.3 103.0L291.9 106.2L299.1 108.5L306.3 110.8L306.3 110.8L298.4 109.5L290.7 107.8L283.9 104.9L278.3 100.5L273.3 95.1L268.2 90.0L262.4 85.7L256.3 81.9L250.4 77.7L245.5 72.3L241.2 66.0L236.7 59.9L231.2 55.3L224.2 52.7L216.4 51.3L208.7 49.6L202.0 46.6L196.3 42.3L190.9 37.4L185.3 32.9L179.1 29.3L172.7 25.8L166.9 21.6L162.0 16.1L157.8 9.6L153.6 3.2L148.7 -2.3L142.8 -6.4L136.4 -9.7L130.2 -13.4L124.4 -17.7L119.0 -22.4L113.5 -27.1ZM13.3 -81.9L19.8 -78.8L26.9 -76.6L34.4 -74.9L41.6 -72.8L47.7 -69.1L52.3 -63.4L55.9 -56.5L60.0 -50.1L65.1 -45.1L71.2 -41.5L77.6 -38.2L83.4 -34.3L88.6 -29.4L93.4 -24.0L98.9 -19.5L105.5 -16.6L112.8 -14.7L120.1 -12.7L126.4 -9.4L131.5 -4.4L135.9 1.6L140.3 7.5L145.3 12.7L145.3 12.7L139.6 8.6L134.3 3.8L129.2 -1.2L123.7 -5.6L117.3 -8.9L110.2 -11.0L102.7 -12.7L95.5 -14.8L88.9 -17.7L82.9 -21.5L77.4 -25.9L71.8 -30.3L66.3 -34.8L61.1 -39.6L56.4 -45.1L52.0 -51.1L47.5 -56.9L42.7 -62.2L37.1 -66.6L31.0 -70.2L24.8 -73.6L18.8 -77.4L13.3 -81.9ZM154.1 19.3L159.9 23.6L164.9 29.0L169.7 34.6L175.2 39.3L182.0 42.3L189.7 43.9L197.5 45.4L204.6 47.9L210.7 51.8L216.2 56.4L221.8 61.0L227.8 65.0L234.0 68.8L239.8 73.1L244.8 78.4L249.2 84.5L253.7 90.7L258.6 96.2L264.1 100.8L270.3 104.6L276.5 108.4L282.5 112.3L288.5 116.3L294.9 119.8L301.7 122.7L308.6 125.4L315.0 128.9L320.4 133.7L324.8 139.9L324.8 139.9L319.9 134.5L313.8 130.5L306.6 128.1L299.0 126.4L291.7 124.2L285.4 120.6L279.6 116.3L273.6 112.3L267.0 109.2L259.8 106.8L253.0 103.9L247.3 99.4L243.2 92.9L239.5 85.6L235.5 79.0L230.2 74.0L223.7 70.6L216.9 67.8L210.4 64.5L204.4 60.5L198.5 56.2L192.3 52.6L185.5 49.7L178.5 47.0L172.1 43.6L166.7 38.8L162.3 32.5L158.3 25.8L154.1 19.3ZM-3.9 -75.5L3.8 -74.0L10.7 -71.4L16.8 -67.7L22.5 -63.4L28.2 -59.2L34.2 -55.4L40.1 -51.5L45.5 -46.9L50.3 -41.4L54.7 -35.3L59.2 -29.5L64.4 -24.7L70.5 -20.9L77.0 -17.7L83.5 -14.6L89.8 -11.2L96.1 -7.8L102.5 -4.6L109.0 -1.4L115.4 1.8L121.3 5.8L126.2 11.0L130.4 17.4L134.2 24.2L138.3 30.7L138.3 30.7L133.4 25.3L129.1 19.1L124.4 13.5L118.5 9.5L111.5 7.2L104.0 5.4L97.1 2.9L91.1 -1.0L85.7 -5.6L79.9 -9.7L73.3 -12.6L66.1 -14.8L59.1 -17.3L53.4 -21.5L48.9 -27.4L45.3 -34.5L41.4 -41.2L36.5 -46.5L30.6 -50.5L24.5 -54.2L18.8 -58.4L13.6 -63.3L8.4 -68.3L2.7 -72.4L-3.9 -75.5ZM145.8 37.1L152.5 39.8L159.1 42.9L165.1 46.6L170.8 50.9L176.5 55.2L182.9 58.4L190.2 60.3L197.9 61.9L204.9 64.3L210.8 68.3L215.7 73.6L220.2 79.4L225.0 84.8L230.3 89.7L235.7 94.3L240.9 99.2L245.6 104.9L250.1 110.7L255.1 115.9L261.0 119.8L267.7 122.7L274.3 125.7L274.3 125.7L266.5 124.4L258.6 123.2L251.4 121.0L245.5 117.0L240.8 111.4L236.6 105.2L231.9 99.5L226.4 95.1L220.4 91.3L214.6 87.1L209.5 82.1L204.7 76.6L199.6 71.6L193.5 67.9L186.5 65.5L179.0 63.8L171.8 61.5L165.7 57.8L160.7 52.7L155.9 47.2L150.9 42.0L145.8 37.1ZM5.3 -53.5L11.8 -50.0L18.3 -46.4L24.6 -42.7L30.5 -38.3L35.7 -33.1L40.4 -27.1L45.2 -21.3L50.7 -16.4L57.0 -12.5L63.6 -9.2L70.1 -5.7L76.5 -2.0L82.9 1.6L89.6 4.9L96.3 8.1L102.9 11.5L108.7 15.9L113.5 21.8L117.4 28.9L117.4 28.9L112.5 23.1L106.6 18.8L99.4 16.2L91.8 14.3L84.5 11.8L78.3 8.0L72.6 3.3L66.5 -0.7L59.5 -3.5L52.0 -5.6L45.0 -8.4L39.3 -13.1L35.0 -19.7L31.5 -27.2L27.5 -34.2L22.3 -39.5L16.3 -43.7L10.5 -48.1L5.3 -53.5ZM123.2 33.0L128.7 37.9L134.1 43.1L139.5 48.1L145.3 52.7L151.8 56.3L158.5 59.5L165.1 63.0L171.6 66.7L178.2 70.0L185.2 72.9L192.4 75.6L198.6 79.5L203.8 84.9L208.1 91.6L211.7 99.1L211.7 99.1L206.8 93.3L201.3 88.3L194.5 85.2L186.8 83.3L179.6 80.7L173.1 77.0L167.4 72.4L161.6 67.9L155.0 64.4L147.6 62.0L140.2 59.7L133.9 55.9L129.5 49.4L126.4 41.1L123.2 33.0ZM146.5 54.6L149.1 58.4L152.1 61.7L155.2 64.7L158.5 67.5L161.9 70.3L165.3 72.9L168.7 75.6L172.0 78.5L172.0 78.5L168.0 76.6L164.2 74.5L160.4 72.3L156.7 70.1L153.1 67.6L149.7 65.0L146.4 62.1L143.5 58.7ZM297.1 154.2L301.2 156.5L305.0 159.3L308.6 162.3L312.1 165.4L315.5 168.6L319.0 171.8L322.5 174.9L326.0 178.1L326.0 178.1L321.8 175.9L317.8 173.4L313.9 170.8L310.1 168.1L306.3 165.4L302.4 162.9L298.3 160.5L293.9 158.5ZM-5.8 -46.6L1.2 -43.8L6.6 -39.0L11.4 -33.3L16.5 -28.1L22.1 -23.5L28.2 -19.5L34.0 -15.3L39.1 -10.0L43.7 -4.1L48.8 1.2L55.0 5.0L62.4 7.0L70.1 8.6L77.3 11.1L83.2 15.3L88.0 20.9L92.6 26.9L97.5 32.4L97.5 32.4L91.6 28.2L86.0 23.7L79.9 19.8L73.2 16.8L65.7 14.7L58.2 12.8L51.2 10.2L45.0 6.4L39.3 2.0L33.7 -2.6L27.9 -6.9L22.1 -11.2L16.7 -16.1L12.1 -22.0L8.3 -29.1L4.4 -35.9L-0.3 -41.8L-5.8 -46.6ZM22.0 -23.0L23.3 -19.0L24.9 -15.3L26.6 -11.7L28.4 -8.3L30.3 -4.9L32.2 -1.7L34.2 1.5L36.1 4.7L36.1 4.7L33.4 2.6L30.8 0.2L28.5 -2.5L26.2 -5.2L24.1 -8.2L22.0 -11.3L20.1 -14.5L18.4 -18.1ZM101.8 36.3L108.5 39.1L114.9 42.3L120.3 46.8L124.5 53.1L128.5 59.5L133.6 64.6L140.0 67.7L147.5 69.4L154.9 71.1L161.2 74.5L166.5 79.2L171.4 84.4L176.5 89.3L176.5 89.3L170.0 86.3L163.7 83.1L156.9 80.3L149.8 78.2L142.8 75.9L136.1 73.0L130.1 69.3L124.9 64.5L120.1 59.0L115.4 53.6L111.0 47.7L106.3 42.1L101.8 36.3ZM-21.2 -38.9L-14.4 -36.1L-9.0 -31.4L-4.3 -25.6L0.4 -20.0L5.9 -15.4L12.1 -11.7L18.3 -8.1L23.8 -3.4L28.4 2.4L33.1 8.1L38.8 12.4L45.9 14.8L53.9 16.0L61.7 17.4L68.5 20.3L73.9 25.0L78.6 30.7L83.5 36.1L89.0 40.7L95.0 44.7L100.6 49.2L105.3 54.8L109.4 61.3L113.6 67.7L118.7 72.9L124.9 76.5L131.9 79.1L138.8 81.9L145.0 85.4L150.7 89.7L156.3 94.2L156.3 94.2L150.0 90.8L143.9 87.0L137.4 83.7L130.4 81.2L123.0 79.2L116.0 76.6L110.0 72.7L105.1 67.2L100.8 61.0L96.4 55.0L91.2 49.9L85.5 45.6L79.5 41.6L73.8 37.4L68.1 32.9L62.3 28.8L55.9 25.5L48.9 22.9L41.8 20.5L35.1 17.5L29.1 13.7L23.5 9.1L18.0 4.5L12.6 -0.3L7.4 -5.2L2.4 -10.5L-2.0 -16.6L-6.1 -23.2L-10.3 -29.6L-15.3 -34.8L-21.2 -38.9ZM166.7 98.9L174.6 100.3L181.3 103.3L186.5 108.3L190.1 115.6L194.0 122.5L199.0 127.7L205.3 131.3L212.0 134.3L218.3 137.7L223.9 142.3L229.0 147.5L234.6 152.0L241.3 155.1L248.5 157.3L255.4 160.0L261.2 164.2L265.6 170.3L265.6 170.3L260.1 165.8L253.8 162.2L246.6 159.9L238.8 158.4L231.2 156.7L224.2 154.2L217.8 150.6L212.2 146.3L206.5 141.8L200.8 137.5L195.2 133.0L190.1 127.9L185.4 122.0L180.9 116.1L176.8 109.5L172.0 103.8L166.7 98.9ZM-34.5 -29.3L-28.4 -25.4L-22.3 -21.7L-16.1 -17.9L-10.3 -13.7L-5.1 -8.7L-0.3 -3.1L4.5 2.6L9.7 7.7L15.7 11.6L22.3 14.8L28.9 17.9L35.1 21.6L41.1 25.6L47.4 29.2L54.2 32.1L61.4 34.4L68.3 37.2L74.1 41.4L78.3 47.8L81.9 55.1L85.7 62.0L90.4 67.9L95.8 72.6L101.3 77.3L101.3 77.3L94.5 74.4L88.6 70.4L83.5 65.0L79.1 59.0L74.3 53.3L68.5 49.0L62.2 45.5L55.4 42.6L49.0 39.2L43.1 35.1L37.4 30.7L31.3 26.9L24.3 24.3L16.8 22.4L9.7 20.0L3.8 15.8L-0.7 9.7L-4.3 2.5L-8.1 -4.5L-13.0 -10.0L-18.7 -14.4L-24.5 -18.6L-29.8 -23.5L-34.5 -29.3ZM-0.6 -0.8L3.0 5.4L7.2 10.9L11.6 15.9L16.4 20.5L21.5 24.6L26.9 28.4L32.4 32.0L37.9 35.7L37.9 35.7L31.8 32.9L25.9 29.8L20.2 26.4L14.8 22.7L9.8 18.5L5.0 13.8L0.7 8.6L-3.2 2.8ZM111.6 86.0L119.2 87.7L126.4 89.9L133.2 92.7L139.8 95.7L146.4 98.7L153.1 101.6L159.4 105.0L165.2 109.2L170.3 114.3L174.8 120.2L179.3 126.2L184.2 131.5L189.8 136.0L195.7 140.0L201.3 144.4L206.5 149.4L211.7 154.3L217.4 158.6L224.0 161.6L231.2 163.9L238.3 166.3L244.5 169.8L249.6 174.9L249.6 174.9L243.4 171.3L236.2 169.1L228.5 167.6L221.1 165.6L214.6 162.4L208.7 158.4L202.8 154.4L196.4 151.2L189.7 148.3L183.4 144.8L178.2 139.8L174.1 133.3L170.6 126.1L166.5 119.6L161.1 114.9L154.4 112.0L147.2 109.8L140.7 106.5L135.3 101.9L130.1 96.9L124.6 92.4L118.2 89.0L111.6 86.0ZM172.7 120.2L176.4 126.7L180.2 133.0L184.2 139.1L188.4 144.9L193.0 150.2L197.8 155.1L203.0 159.5L208.4 163.7L208.4 163.7L202.4 160.4L196.8 156.6L191.6 152.2L186.7 147.2L182.2 141.9L177.9 136.2L173.8 130.2L169.9 124.0ZM-39.2 -11.4L-32.8 -8.0L-26.4 -4.8L-20.2 -1.2L-15.0 3.9L-10.6 10.0L-6.4 16.3L-1.4 21.7L4.6 25.5L11.5 28.2L18.7 30.4L25.5 33.2L31.8 36.6L37.9 40.4L44.1 44.1L50.4 47.5L56.2 51.7L61.3 56.7L65.6 63.0L69.1 70.4L69.1 70.4L64.5 64.6L59.5 59.3L53.3 55.6L46.1 53.3L39.1 50.9L32.7 47.5L27.0 43.3L21.4 38.8L15.3 35.1L8.4 32.5L1.1 30.3L-5.7 27.5L-11.3 23.1L-15.8 17.1L-19.9 10.6L-24.3 4.5L-29.1 -1.1L-34.3 -6.0L-39.2 -11.4ZM-15.8 6.6L-11.3 9.7L-6.9 13.0L-2.4 16.2L2.2 19.1L7.0 21.8L12.1 24.2L17.2 26.5L22.3 28.8L22.3 28.8L16.3 27.6L10.7 26.1L5.2 24.3L-0.1 22.2L-5.1 19.9L-10.0 17.2L-14.7 14.4L-19.5 11.7ZM74.4 78.2L80.2 82.5L86.7 85.7L93.7 88.3L100.4 91.2L106.4 95.2L112.0 99.7L118.0 103.5L124.9 106.3L132.3 108.3L139.4 110.8L145.5 114.5L150.7 119.7L155.2 125.6L159.8 131.4L164.9 136.7L170.3 141.5L175.7 146.3L180.8 151.4L185.9 156.5L191.4 161.2L197.7 164.8L204.6 167.4L211.7 169.8L218.3 173.0L224.1 177.2L229.4 182.1L234.6 187.2L234.6 187.2L228.8 183.0L223.2 178.5L216.9 174.9L209.7 172.7L201.7 171.5L193.9 170.0L187.2 167.0L181.8 162.2L177.3 156.3L172.6 150.5L167.1 145.8L161.1 141.9L155.3 137.7L150.1 132.6L145.7 126.5L141.2 120.5L135.8 115.7L129.2 112.6L121.7 110.7L114.2 108.8L107.4 106.0L101.3 102.1L95.9 97.4L90.6 92.5L84.9 88.2L79.3 83.7L74.4 78.2ZM161.3 132.0L163.7 137.3L166.3 142.2L169.0 147.0L171.8 151.7L174.8 156.1L178.0 160.3L181.3 164.3L184.6 168.3L184.6 168.3L180.4 165.5L176.6 162.2L173.0 158.7L169.6 154.8L166.3 150.7L163.3 146.4L160.3 141.9L157.6 137.1ZM-53.7 -4.4L-46.0 -2.6L-39.6 0.9L-34.4 6.1L-29.8 12.1L-25.4 18.5L-20.6 24.2L-14.8 28.6L-8.2 31.8L-1.2 34.5L5.2 38.1L10.9 42.6L16.4 47.4L21.9 52.2L21.9 52.2L15.2 49.1L8.7 45.7L1.4 43.3L-6.2 41.5L-13.5 39.2L-19.9 35.6L-24.9 30.1L-28.9 23.3L-33.0 16.6L-38.0 11.1L-44.0 7.0L-49.6 2.3L-53.7 -4.4ZM27.7 55.2L34.4 58.1L41.2 60.9L47.8 64.0L53.7 68.2L58.6 73.6L62.9 79.9L67.1 86.3L72.2 91.5L78.2 95.4L84.7 98.7L91.1 102.0L97.4 105.6L103.6 109.2L110.0 112.5L116.7 115.5L123.4 118.5L129.6 122.2L134.9 127.1L139.4 133.0L143.8 139.3L148.4 145.0L153.6 150.1L158.9 155.0L158.9 155.0L152.7 151.4L146.8 147.2L141.8 142.0L137.4 135.9L132.8 130.0L127.2 125.5L120.2 122.9L112.4 121.5L104.7 119.9L98.0 116.9L92.4 112.5L87.0 107.7L81.2 103.5L74.7 100.3L68.0 97.2L62.1 93.2L57.2 87.7L53.5 80.6L49.9 73.4L45.4 67.4L39.7 63.0L33.5 59.4L27.7 55.2ZM97.7 107.5L103.9 108.9L110.0 110.6L115.9 112.5L121.6 114.7L127.1 117.1L132.3 120.0L137.3 123.2L141.8 127.0L141.8 127.0L136.5 124.3L131.1 121.7L125.5 119.4L119.6 117.4L113.5 115.8L107.3 114.3L101.0 113.0L94.5 111.9ZM167.7 164.4L174.7 166.8L181.3 169.8L187.3 173.6L193.1 177.7L199.5 181.0L206.7 183.1L214.4 184.6L221.5 186.8L227.5 190.6L232.2 196.2L236.2 202.8L240.4 209.1L245.4 214.3L251.1 218.5L256.9 222.5L262.3 227.1L267.2 232.4L272.3 237.5L278.1 241.5L284.8 244.4L292.0 246.5L298.9 249.2L304.8 253.0L309.8 258.2L309.8 258.2L304.1 254.0L297.8 250.6L290.6 248.5L282.7 247.2L275.1 245.7L268.4 242.9L262.8 238.5L257.9 233.2L253.0 227.8L247.8 223.0L242.1 218.7L236.6 214.3L231.6 209.1L227.0 203.4L222.2 197.8L216.8 193.3L210.5 190.0L203.7 187.2L196.9 184.5L190.7 181.0L184.9 176.9L179.3 172.5L173.6 168.4L167.7 164.4ZM234.3 200.4L237.8 202.3L240.9 204.7L243.9 207.2L246.9 209.7L249.8 212.4L252.8 215.0L255.7 217.6L258.5 220.4L258.5 220.4L254.8 218.8L251.4 216.9L248.0 214.9L244.6 212.9L241.3 210.8L237.9 208.8L234.4 206.9L230.7 205.4ZM-48.9 20.9L-42.8 24.9L-37.8 30.5L-33.0 36.4L-27.7 41.7L-21.0 44.8L-13.2 46.6L-5.4 48.4L1.4 51.5L7.3 55.9L12.6 61.1L18.4 65.6L24.8 69.3L31.1 73.1L36.3 78.3L40.3 85.4L40.3 85.4L35.3 79.8L29.5 75.2L22.9 71.8L15.9 69.0L9.0 66.1L2.3 62.7L-3.9 58.9L-10.5 55.4L-17.5 52.5L-24.5 49.7L-30.9 46.1L-36.6 41.3L-41.0 34.9L-44.9 27.9L-48.9 20.9ZM-6.9 51.9L-1.6 52.9L3.5 54.1L8.5 55.6L13.4 57.2L18.1 59.0L22.6 61.1L26.9 63.5L30.9 66.3L30.9 66.3L26.4 64.3L21.7 62.4L16.9 60.7L11.9 59.2L6.8 57.9L1.6 56.8L-3.8 55.8L-9.3 55.2ZM47.4 92.1L52.5 97.4L57.4 102.7L63.1 107.2L69.6 110.5L76.7 112.9L83.9 115.2L90.5 118.3L96.7 122.0L102.9 125.6L109.4 128.9L116.1 131.9L122.5 135.4L127.8 140.4L132.0 146.7L135.8 153.7L139.7 160.5L144.5 166.2L150.2 170.6L156.2 174.5L162.1 178.7L162.1 178.7L155.1 176.1L148.3 173.2L142.3 169.2L137.5 163.6L133.3 157.2L128.7 151.2L123.2 146.6L116.6 143.5L110.0 140.4L103.8 136.7L98.2 132.2L92.8 127.4L86.7 123.5L79.6 121.1L72.2 119.1L65.2 116.5L59.5 112.1L55.1 106.0L51.3 98.9L47.4 92.1ZM210.2 202.2L214.2 204.0L218.0 206.3L221.5 208.9L224.9 211.6L228.2 214.5L231.4 217.5L234.6 220.5L237.7 223.8L237.7 223.8L233.9 221.6L230.2 219.2L226.6 216.7L222.9 214.3L219.2 212.0L215.4 209.9L211.3 208.0L207.0 206.6ZM-63.5 32.6L-57.1 36.2L-50.9 40.1L-45.1 44.6L-39.5 49.3L-33.5 53.6L-26.9 57.0L-19.5 59.2L-11.9 61.1L-4.8 63.8L1.3 67.9L6.6 73.0L11.8 78.3L17.4 83.1L23.3 87.4L29.0 92.1L33.8 97.8L37.9 104.7L41.9 111.7L46.5 117.7L46.5 117.7L41.2 112.6L36.4 106.8L31.3 101.3L25.6 96.6L19.6 92.5L13.8 88.1L8.4 83.0L3.2 77.7L-2.6 73.2L-9.5 70.3L-17.3 68.6L-25.2 67.0L-32.1 64.1L-37.8 59.5L-42.6 53.7L-47.5 47.9L-52.9 42.9L-58.5 38.2L-63.5 32.6ZM-3.7 67.6L1.6 69.0L6.5 70.9L11.1 73.2L15.6 75.8L19.7 78.7L23.7 81.9L27.6 85.4L31.1 89.2L31.1 89.2L26.9 86.3L22.6 83.5L18.3 80.8L13.7 78.3L9.0 76.1L4.1 74.3L-1.1 72.7L-6.7 71.7ZM54.8 123.4L62.5 125.5L71.0 126.4L79.5 127.3L87.0 129.7L92.7 134.6L97.9 140.0L103.6 144.8L110.1 148.7L116.3 152.7L121.7 157.9L126.0 164.7L129.7 172.4L133.9 179.2L139.3 184.4L139.3 184.4L132.7 180.8L127.2 175.7L122.5 169.6L117.7 163.5L112.3 158.2L106.2 154.0L99.9 150.0L93.6 146.0L87.4 141.9L81.0 138.0L74.7 134.0L67.9 130.7L61.0 127.5L54.8 123.4ZM209.5 223.5L211.6 228.3L213.9 232.9L216.3 237.4L218.8 241.8L221.3 246.1L224.0 250.2L226.7 254.1L229.6 258.0L229.6 258.0L226.1 255.1L222.9 251.7L219.9 248.1L217.0 244.2L214.2 240.3L211.6 236.2L209.0 232.0L206.6 227.5ZM-74.4 44.7L-68.1 48.3L-61.1 50.9L-54.3 53.8L-48.7 58.2L-43.6 63.5L-38.1 68.1L-31.5 71.3L-23.9 73.0L-16.0 74.3L-8.8 76.7L-3.4 81.5L0.6 88.2L4.5 95.0L9.0 101.1L9.0 101.1L3.1 97.0L-2.4 92.3L-8.1 88.0L-14.2 84.1L-20.7 80.9L-27.8 78.4L-34.9 75.9L-41.5 72.8L-47.7 69.0L-53.6 65.0L-59.4 60.8L-64.8 56.0L-69.9 50.8L-74.4 44.7ZM17.8 107.1L23.5 111.3L28.2 116.7L32.8 122.3L38.2 126.9L44.8 129.8L52.3 131.5L59.9 133.0L66.7 135.5L72.6 139.4L77.9 144.1L83.3 148.6L89.3 152.3L95.5 155.7L101.3 159.6L106.2 164.9L110.1 171.5L113.7 178.5L117.9 184.7L123.1 189.6L129.0 193.4L129.0 193.4L122.2 190.7L116.1 187.2L110.9 182.4L106.5 176.5L102.3 170.2L97.6 164.7L92.0 160.5L85.7 157.3L79.1 154.3L72.8 151.0L66.8 147.3L60.8 143.7L54.4 140.5L47.7 137.7L41.0 135.0L35.0 131.3L30.0 126.2L25.7 120.1L21.8 113.6L17.8 107.1ZM188.5 224.4L190.6 228.7L192.8 232.8L195.0 237.0L197.2 241.1L199.3 245.3L201.5 249.5L203.7 253.7L205.9 257.9L205.9 257.9L203.0 254.7L200.3 251.2L197.7 247.5L195.2 243.8L192.7 240.1L190.2 236.4L187.7 232.6L185.3 228.7ZM-75.8 65.2L-70.2 69.7L-63.7 72.8L-56.2 74.6L-48.4 76.1L-41.1 78.2L-34.6 81.4L-28.7 85.5L-23.0 89.8L-17.0 93.6L-10.7 97.1L-4.7 101.0L0.5 106.0L4.9 112.0L9.2 118.4L13.9 124.1L19.3 128.8L25.3 132.6L31.5 136.2L37.7 139.8L43.9 143.5L50.0 147.2L56.5 150.5L63.2 153.4L69.7 156.6L75.3 161.0L79.9 166.9L79.9 166.9L74.4 162.3L67.7 159.3L60.0 157.7L52.2 156.4L45.0 154.1L38.9 150.3L33.5 145.6L27.8 141.3L21.3 138.1L14.5 135.3L8.2 131.9L3.0 126.9L-1.0 120.2L-4.6 113.1L-8.9 106.8L-14.4 102.2L-21.0 99.1L-27.8 96.4L-34.2 92.9L-39.8 88.6L-45.4 84.1L-51.5 80.3L-58.2 77.4L-65.0 74.6L-71.0 70.8L-75.8 65.2ZM-9.5 99.7L-6.0 101.5L-2.8 103.6L0.3 106.0L3.3 108.5L6.2 111.1L9.1 113.7L11.9 116.3L14.7 119.1L14.7 119.1L11.2 117.3L7.8 115.4L4.6 113.3L1.3 111.2L-2.0 109.2L-5.4 107.3L-8.9 105.5L-12.7 104.2ZM85.1 173.8L91.6 176.9L97.3 181.3L102.1 186.8L106.8 192.5L111.7 197.9L117.8 201.7L124.7 204.4L131.7 206.7L138.3 209.8L144.3 213.8L149.9 218.2L156.0 222.0L162.7 224.9L169.5 227.6L175.8 231.2L180.8 236.4L184.7 243.2L188.3 250.4L192.4 256.9L197.6 261.9L203.6 265.7L209.8 269.4L215.4 273.8L215.4 273.8L209.0 270.5L202.5 267.3L196.3 263.7L190.8 259.0L186.1 253.3L181.7 247.3L176.9 241.8L171.2 237.4L164.9 234.0L158.5 230.6L152.5 226.8L146.7 222.6L140.6 218.9L133.9 216.0L126.6 213.9L119.3 211.8L112.8 208.6L107.6 203.6L103.3 197.3L99.5 190.4L95.1 184.3L90.1 179.0L85.1 173.8ZM-91.5 71.7L-85.3 75.2L-78.2 77.6L-70.7 79.4L-63.5 81.6L-57.0 84.8L-51.3 89.0L-45.4 92.9L-38.9 96.1L-32.1 98.8L-25.6 102.0L-20.0 106.4L-15.3 112.0L-11.0 118.2L-6.5 124.1L-1.5 129.3L4.0 133.8L9.6 138.3L15.0 143.0L20.4 147.7L26.2 151.8L32.7 154.9L39.7 157.4L46.7 159.9L53.0 163.3L58.3 168.1L58.3 168.1L52.3 164.3L45.2 161.9L37.3 160.7L29.5 159.3L22.6 156.7L16.8 152.5L11.7 147.6L6.2 142.9L0.2 139.2L-6.2 135.8L-12.1 131.8L-16.9 126.4L-20.9 119.7L-24.8 113.0L-29.6 107.4L-35.7 103.7L-42.8 101.4L-50.1 99.4L-56.9 96.6L-63.0 92.9L-68.4 88.3L-74.0 83.9L-80.2 80.3L-86.3 76.6L-91.5 71.7ZM63.0 173.8L69.8 176.7L76.1 180.4L81.7 185.0L86.7 190.4L91.1 196.7L95.9 202.4L101.5 207.0L107.8 210.6L114.4 213.8L120.8 217.2L127.2 220.8L133.7 224.2L140.6 227.0L147.6 229.6L154.2 232.8L159.9 237.3L164.6 243.0L169.0 249.4L173.6 255.3L178.9 260.3L184.6 264.8L190.2 269.4L195.4 274.5L200.3 280.1L205.6 285.1L211.9 288.8L219.0 291.2L226.5 293.2L233.4 296.0L233.4 296.0L225.8 294.1L218.0 292.6L210.6 290.4L204.2 286.9L198.6 282.5L192.9 277.9L186.9 273.9L180.7 270.2L174.8 266.0L169.8 260.5L165.6 254.0L161.5 247.4L156.4 242.1L150.0 238.7L142.6 236.5L135.2 234.3L128.7 231.0L122.9 226.7L117.4 222.0L111.2 218.2L104.3 215.4L97.2 212.9L90.8 209.4L85.7 204.1L81.8 197.2L78.4 189.5L74.2 183.1L68.8 178.2L63.0 173.8ZM-114.8 67.8L-109.7 73.2L-105.1 79.1L-99.7 84.1L-93.0 87.3L-85.6 89.4L-78.1 91.4L-71.3 94.4L-65.2 98.4L-59.5 102.8L-53.4 106.8L-46.8 110.1L-40.1 113.3L-34.1 117.3L-29.0 122.7L-24.7 129.1L-20.4 135.5L-15.5 141.1L-9.8 145.7L-3.7 149.6L2.2 153.7L8.0 158.1L13.9 162.3L20.3 165.9L27.2 168.7L34.4 171.2L41.0 174.5L46.5 179.2L46.5 179.2L40.3 175.4L33.0 173.2L25.0 171.8L17.3 170.0L10.7 166.8L4.9 162.4L-0.7 157.8L-6.8 153.8L-13.3 150.5L-19.8 147.0L-25.3 142.3L-29.7 136.0L-33.6 128.9L-37.9 122.5L-43.3 117.6L-49.9 114.4L-57.0 111.8L-63.9 108.9L-70.2 105.2L-76.3 101.2L-82.6 97.6L-89.3 94.5L-96.2 91.6L-102.2 87.5L-107.2 82.0L-111.2 75.2L-114.8 67.8ZM-41.3 113.5L-38.5 118.1L-35.7 122.6L-32.9 127.3L-30.2 132.0L-27.6 136.7L-24.9 141.5L-22.2 146.2L-19.6 151.0L-19.6 151.0L-23.0 147.3L-26.2 143.2L-29.2 139.0L-32.3 134.8L-35.3 130.5L-38.4 126.3L-41.5 122.2L-44.6 118.1ZM99.8 225.2L106.7 227.3L113.6 229.4L120.4 231.6L127.1 234.0L133.6 236.7L139.8 239.9L145.5 243.5L150.8 247.9L150.8 247.9L144.8 244.6L138.5 241.6L132.0 239.0L125.1 236.8L118.1 234.8L110.9 233.1L103.8 231.3L96.5 229.6ZM-22.5 162.2L-16.1 165.6L-8.6 167.4L-0.7 168.7L6.6 170.8L12.8 174.4L18.2 179.1L23.9 183.4L30.3 186.7L37.2 189.4L43.7 192.6L49.1 197.3L53.2 203.7L56.9 210.8L61.0 217.3L66.2 222.2L72.6 225.6L79.2 228.6L85.4 232.2L91.1 236.6L96.6 241.2L102.6 245.0L109.3 247.9L116.3 250.4L122.7 253.8L122.7 253.8L115.7 251.2L108.2 249.5L100.6 247.7L93.7 245.1L87.4 241.6L81.5 237.6L75.5 233.7L69.3 230.1L63.2 226.4L57.5 222.1L52.7 216.6L48.4 210.4L44.0 204.3L38.9 199.1L33.2 194.9L27.0 191.2L20.8 187.6L14.8 183.8L8.6 180.2L2.2 176.9L-4.4 173.8L-11.1 170.8L-17.3 167.2L-22.5 162.2ZM52.0 204.7L55.8 207.4L59.4 210.3L63.0 213.3L66.6 216.2L70.2 219.0L74.0 221.7L77.9 224.3L81.8 226.8L81.8 226.8L77.1 225.4L72.7 223.6L68.4 221.5L64.4 219.3L60.4 216.9L56.5 214.4L52.6 211.9L48.5 209.7ZM185.1 305.5L192.2 307.3L199.1 309.3L205.8 311.6L212.3 314.3L218.4 317.4L224.2 321.0L229.5 325.2L234.5 329.9L234.5 329.9L228.9 326.1L223.1 322.5L217.0 319.3L210.6 316.7L203.8 314.4L196.8 312.5L189.7 310.8L182.4 309.3ZM-140.0 92.5L-133.8 96.1L-127.4 99.5L-121.2 103.0L-115.1 106.8L-108.9 110.4L-102.5 113.7L-95.6 116.4L-88.5 118.8L-81.7 121.5L-75.6 125.3L-70.2 130.0L-65.2 135.2L-59.9 140.1L-54.5 144.7L-49.0 149.4L-44.0 154.7L-39.5 160.6L-35.1 166.6L-29.9 171.6L-23.7 175.2L-16.5 177.5L-9.1 179.5L-2.4 182.3L3.5 186.4L8.9 191.2L14.3 195.8L20.2 199.8L26.4 203.4L32.2 207.6L37.1 213.0L41.0 219.7L41.0 219.7L36.4 214.0L31.1 209.2L25.0 205.4L18.8 201.8L12.8 197.9L7.0 193.7L1.0 189.8L-5.7 186.9L-13.1 185.0L-20.7 183.3L-27.6 180.6L-33.4 176.4L-38.1 170.8L-42.8 165.1L-47.9 160.0L-53.7 155.8L-59.5 151.7L-64.9 146.9L-69.5 141.1L-73.8 134.9L-78.7 129.5L-84.9 126.0L-92.4 124.1L-100.3 122.8L-107.6 120.7L-113.6 116.8L-118.5 111.5L-123.4 106.1L-128.8 101.4L-134.6 97.2L-140.0 92.5ZM-53.3 148.2L-51.6 152.6L-49.5 156.8L-47.4 160.8L-45.2 164.6L-42.9 168.4L-40.5 172.0L-38.0 175.4L-35.5 178.8L-35.5 178.8L-38.6 176.2L-41.5 173.2L-44.2 170.1L-46.8 166.7L-49.2 163.2L-51.6 159.5L-53.8 155.7L-55.8 151.6ZM141.2 292.3L144.4 297.8L147.9 302.7L151.7 307.2L155.7 311.4L160.0 315.2L164.5 318.7L169.2 322.1L173.7 325.6L173.7 325.6L168.4 323.2L163.3 320.5L158.3 317.5L153.7 314.2L149.2 310.5L145.1 306.5L141.3 302.0L137.9 296.9ZM-107.6 127.1L-104.1 130.4L-100.4 133.6L-96.8 136.9L-93.4 140.3L-90.1 144.0L-86.9 147.9L-84.0 152.0L-81.3 156.6L-81.3 156.6L-84.7 153.0L-88.2 149.5L-91.7 146.2L-95.3 143.0L-99.1 140.0L-103.0 137.2L-106.9 134.4L-110.8 131.4ZM83.6 264.1L87.6 268.0L91.8 271.9L95.7 276.0L99.4 280.4L103.0 285.1L106.3 290.0L109.5 295.2L112.4 300.7L112.4 300.7L108.7 296.3L105.0 291.8L101.3 287.4L97.4 283.2L93.3 279.3L89.0 275.6L84.6 272.1L80.2 268.6ZM5.7 226.7L10.2 229.9L14.3 233.5L18.4 237.2L22.5 240.8L26.7 244.4L31.1 247.7L35.6 250.8L40.2 253.8L40.2 253.8L34.8 251.9L29.8 249.5L25.0 246.7L20.4 243.7L16.0 240.6L11.6 237.3L7.1 234.2L2.3 231.4ZM151.9 336.0L156.8 339.8L161.8 343.6L166.7 347.5L171.3 351.7L175.7 356.3L179.8 361.2L183.6 366.6L187.1 372.3L187.1 372.3L182.9 367.5L178.7 362.8L174.2 358.3L169.5 354.2L164.6 350.4L159.4 346.9L154.1 343.6L149.0 340.1ZM32.3 270.8L35.7 274.2L39.3 277.2L43.0 280.1L46.7 283.0L50.5 285.8L54.1 288.8L57.6 292.0L60.8 295.5L60.8 295.5L56.8 293.0L52.9 290.5L48.8 288.1L44.7 285.7L40.7 283.3L36.6 280.9L32.7 278.3L29.1 275.3ZM151.3 349.5L154.2 352.9L157.1 356.1L159.9 359.5L162.7 362.9L165.3 366.6L167.7 370.5L170.1 374.5L172.2 378.8L172.2 378.8L169.2 375.7L166.3 372.4L163.4 369.2L160.4 366.1L157.3 363.1L154.1 360.3L150.8 357.5L147.7 354.6ZM-177.1 143.2L-169.8 145.3L-162.8 147.6L-156.2 150.6L-150.1 154.1L-143.9 157.7L-137.3 160.7L-130.5 163.4L-123.9 166.3L-118.2 170.4L-113.3 175.8L-109.0 181.9L-104.6 187.9L-99.7 193.2L-94.2 197.7L-88.6 202.0L-82.9 206.2L-77.3 210.5L-71.3 214.2L-64.6 217.2L-57.7 219.6L-50.6 222.0L-44.1 225.1L-38.6 229.4L-33.7 234.8L-29.0 240.4L-24.0 245.6L-18.7 250.2L-13.3 254.8L-8.3 260.0L-3.9 266.0L0.3 272.2L0.3 272.2L-4.5 266.8L-9.5 261.7L-15.1 257.3L-20.9 253.3L-26.3 248.8L-31.2 243.4L-35.9 237.8L-41.0 232.9L-47.4 229.6L-54.9 227.8L-62.8 226.6L-70.0 224.6L-76.1 220.9L-81.2 215.9L-86.3 210.9L-92.0 206.7L-98.3 203.4L-104.6 200.0L-110.1 195.4L-114.4 189.4L-118.1 182.5L-122.2 176.0L-127.3 171.0L-133.6 167.6L-140.5 165.1L-147.2 162.2L-153.2 158.4L-158.7 154.0L-164.4 149.8L-170.6 146.3L-177.1 143.2ZM58.6 300.2L64.3 303.4L69.5 307.3L74.4 311.6L79.1 316.2L83.8 320.8L88.5 325.3L93.4 329.7L98.3 333.9L98.3 333.9L92.5 330.9L87.1 327.3L81.9 323.3L76.9 319.3L71.7 315.3L66.5 311.5L60.9 308.0L54.9 305.3Z"/></g>
<rect x="5.8" y="7.2" width="429.9" height="609.6" fill="none" stroke="#eee8b8" stroke-width=".7" opacity=".6"/>
<g fill="#fff" stroke="#555" stroke-width=".5">
<rect x="81.0" y="104.5" width="5" height="5"/><rect x="168.0" y="104.5" width="5" height="5"/><rect x="255.0" y="104.5" width="5" height="5"/><rect x="81.0" y="191.0" width="5" height="5"/><rect x="255.0" y="191.0" width="5" height="5"/><rect x="81.0" y="277.5" width="5" height="5"/><rect x="168.0" y="277.5" width="5" height="5"/><rect x="255.0" y="277.5" width="5" height="5"/></g></svg>

<style>
.cb{position:absolute;width:11.5px;height:11.5px;border-radius:3px;background:linear-gradient(#6a696a,#5a595a)}
.sec{position:absolute;font-size:11.5px;font-weight:bold;color:#f2f2f2;letter-spacing:.1px}
.dd{position:absolute;height:15.5px;background:#4f4e4f;border-radius:5px}
.well{position:absolute;background:#484748;border:1px solid #5a595a}
.well i{position:absolute;background:#b0b0b0}
.tf{position:absolute;background:#3c3b3c;border-bottom:1px solid #5c5b5c}
.stp{position:absolute;width:10px;background:#4a494a;border-radius:4px}
</style>
<div class="abs" style="left:1202px;top:82px;width:218px;height:754px;background:#323132;border-left:1px solid #585758">
  <!-- scrollbar -->
  <div class="abs" style="left:206px;top:0;width:12px;height:552px;background:#3a393a"></div>
  <div class="abs" style="left:210px;top:3px;width:6px;height:494px;background:#6f6e6f;border-radius:3px"></div>

  <!-- Fill -->
  <div class="cb" style="left:12px;top:12px"></div>
  <div class="sec" style="left:27.5px;top:11px">Fill</div>
  <div class="dd" style="left:13px;top:33.5px;width:192px"></div>
  <svg class="abs" style="left:194px;top:36.5px" width="6" height="10" viewBox="0 0 6 10"><path d="M1 3.4L3 1.2l2 2.2M1 6.6L3 8.8l2-2.2" fill="none" stroke="#7f7e7f" stroke-width="1" stroke-linecap="round" stroke-linejoin="round"/></svg>
  <div class="well" style="left:12.5px;top:59px;width:57px;height:58.5px"><i style="left:4px;top:4px;width:47.5px;height:49px"></i></div>

  <!-- Image / Mask -->
  <div class="sec" style="left:12.5px;top:142px">Image</div>
  <div class="sec" style="left:146.5px;top:142px">Mask</div>
  <div class="abs" style="left:9.5px;top:162px;width:61px;height:61px;border:2px solid #757475;border-radius:6.5px"></div>
  <div class="abs" style="left:21px;top:188px;width:39px;height:9px;background:#575657;border-radius:1px;filter:blur(.6px)"></div>
  <svg class="abs" style="left:58.5px;top:212px" width="7" height="5" viewBox="0 0 7 5"><path d="M0 .5h7L3.5 4.5Z" fill="#0a0a0a"/></svg>
  <div class="abs" style="left:144.5px;top:162px;width:61px;height:61px;border:2px solid #757475;border-radius:6.5px"></div>
  <svg class="abs" style="left:193.5px;top:212px" width="7" height="5" viewBox="0 0 7 5"><path d="M0 .5h7L3.5 4.5Z" fill="#0a0a0a"/></svg>
  <!-- dropdown under image -->
  <div class="dd" style="left:12.5px;top:237px;width:191.5px;height:14.5px;background:#5b5a5b"></div>
  <div class="abs" style="left:190.5px;top:237px;width:13px;height:14.5px;background:#2f6fe3;border-radius:4px"></div>
  <svg class="abs" style="left:194px;top:239.5px" width="6" height="10" viewBox="0 0 6 10"><path d="M1 3.4L3 1.2l2 2.2M1 6.6L3 8.8l2-2.2" fill="none" stroke="#fff" stroke-width="1.2" stroke-linecap="round" stroke-linejoin="round"/></svg>
  <div class="abs" style="left:17px;top:239px;width:2px;height:10px;background:#e8e8e8"></div>
  <div class="abs" style="left:12.5px;top:266px;width:11px;height:10.5px;background:#8a898a;border:1px solid #a3a2a3"></div>
  <div class="tf" style="left:100px;top:263.5px;width:92px;height:15px"></div>
  <div class="stp" style="left:195px;top:263px;height:16px"></div>
  <svg class="abs" style="left:197px;top:265.5px" width="6" height="11" viewBox="0 0 6 11"><path d="M1 3.6L3 1.4l2 2.2M1 7.4L3 9.6l2-2.2" fill="none" stroke="#6e6d6e" stroke-width="1" stroke-linecap="round" stroke-linejoin="round"/></svg>
  <!-- magenta highlight box -->
  <div class="abs" style="left:2.5px;top:136px;width:153px;height:155.5px;border:1px solid #d63fb9;border-radius:5px"></div>
  <!-- popup -->
  <div class="abs" style="left:21px;top:232px;width:125px;height:54px;background:#525152;border-radius:6.5px;box-shadow:0 0 0 .5px #2a292a,0 3px 10px rgba(0,0,0,.35)"></div>
  <div class="abs" style="left:26px;top:237px;width:115.5px;height:21.5px;background:#4a85e2;border-radius:4.5px"></div>
  <div class="abs" style="left:35px;top:240.5px;font-size:13px;color:#fff;letter-spacing:.11px;-webkit-text-stroke:.2px #fff;white-space:nowrap">Custom Image...</div>
  <div class="abs" style="left:35px;top:262.5px;font-size:13px;color:#f0f0f0;letter-spacing:.11px;-webkit-text-stroke:.2px #f0f0f0;white-space:nowrap">Clear Image</div>

  <!-- Stroke -->
  <div class="cb" style="left:12px;top:307.5px"></div>
  <div class="sec" style="left:27.5px;top:306.5px">Stroke</div>
  <div class="dd" style="left:13.5px;top:328.5px;width:125px"></div>
  <svg class="abs" style="left:128px;top:331.5px" width="6" height="10" viewBox="0 0 6 10"><path d="M1 3.4L3 1.2l2 2.2M1 6.6L3 8.8l2-2.2" fill="none" stroke="#7f7e7f" stroke-width="1" stroke-linecap="round" stroke-linejoin="round"/></svg>
  <div class="well" style="left:147.5px;top:324px;width:57.5px;height:24px"><i style="left:4px;top:4px;width:48.5px;height:14px"></i></div>
  <div class="abs" style="left:12.5px;top:359.5px;font-size:11.7px;color:#dedede;letter-spacing:-.1px">Thickness</div>
  <div class="abs" style="left:17px;top:388.5px;width:121px;height:1.5px;background:#414041"></div>
  <div class="abs" style="left:40.5px;top:385px;width:1px;height:8px;background:#424142"></div>
  <div class="abs" style="left:64px;top:385px;width:1px;height:8px;background:#424142"></div>
  <div class="abs" style="left:87px;top:385px;width:1px;height:8px;background:#424142"></div>
  <div class="abs" style="left:111px;top:385px;width:1px;height:8px;background:#424142"></div>
  <div class="abs" style="left:136px;top:385px;width:1px;height:8px;background:#424142"></div>
  <div class="abs" style="left:14.5px;top:381.5px;width:8px;height:15px;background:#555455;border-radius:3.5px"></div>
  <div class="tf" style="left:148.5px;top:378.5px;width:44px;height:15px"></div>
  <div class="stp" style="left:195px;top:377px;height:17px"></div>
  <svg class="abs" style="left:197px;top:380px" width="6" height="11" viewBox="0 0 6 11"><path d="M1 3.6L3 1.4l2 2.2M1 7.4L3 9.6l2-2.2" fill="none" stroke="#6e6d6e" stroke-width="1" stroke-linecap="round" stroke-linejoin="round"/></svg>

  <!-- Shadow -->
  <div class="cb" style="left:12px;top:423.5px"></div>
  <div class="sec" style="left:27.5px;top:422.5px">Shadow</div>
  <div class="abs" style="left:14px;top:451px;width:20px;height:20px;border-radius:50%;background:#4d4c4d"></div>
  <div class="abs" style="left:21.5px;top:451.5px;width:5px;height:5px;border-radius:50%;background:#f0f0f0"></div>
  <div class="tf" style="left:40.5px;top:452.5px;width:45px;height:16px"></div>
  <div class="stp" style="left:88.5px;top:451.5px;height:17px"></div>
  <svg class="abs" style="left:90.5px;top:454.5px" width="6" height="11" viewBox="0 0 6 11"><path d="M1 3.6L3 1.4l2 2.2M1 7.4L3 9.6l2-2.2" fill="none" stroke="#6e6d6e" stroke-width="1" stroke-linecap="round" stroke-linejoin="round"/></svg>
  <div class="well" style="left:147.5px;top:448.5px;width:57.5px;height:24px"><i style="left:4px;top:4px;width:48.5px;height:14px"></i></div>
  <!-- shadow sliders -->
  <div class="abs" style="left:13.5px;top:489.5px;width:10px;height:10px;border-radius:50%;border:2px solid #bdbcbd"></div>
  <div class="abs" style="left:38px;top:493px;width:76px;height:1.5px;background:#414041"></div>
  <div class="abs" style="left:30.5px;top:486.5px;width:15px;height:15px;border-radius:50%;background:#555455"></div>
  <svg class="abs" style="left:119px;top:484.5px" width="17" height="17" viewBox="0 0 17 17"><circle cx="10.5" cy="10.5" r="4.6" fill="#a8a7a8"/><circle cx="6.3" cy="6.3" r="4.5" fill="#323132" stroke="#d6d5d6" stroke-width="1.5"/></svg>
  <div class="tf" style="left:148.5px;top:485.5px;width:44px;height:15px"></div>
  <div class="stp" style="left:195px;top:484.5px;height:17px"></div>
  <svg class="abs" style="left:197px;top:487.5px" width="6" height="11" viewBox="0 0 6 11"><path d="M1 3.6L3 1.4l2 2.2M1 7.4L3 9.6l2-2.2" fill="none" stroke="#6e6d6e" stroke-width="1" stroke-linecap="round" stroke-linejoin="round"/></svg>

  <div class="abs" style="left:13.5px;top:516px;width:10px;height:10px;border-radius:50%;border:2px solid #bdbcbd"></div>
  <div class="abs" style="left:38px;top:520px;width:76px;height:1.5px;background:#414041"></div>
  <div class="abs" style="left:30.5px;top:513px;width:15px;height:15px;border-radius:50%;background:#555455"></div>
  <svg class="abs" style="left:119.5px;top:512.5px" width="16" height="16" viewBox="0 0 16 16"><g fill="none" stroke="#c9c8c9"><circle cx="8" cy="8" r="7.2" stroke-width=".7"/><circle cx="8" cy="8" r="5.6" stroke-width=".9"/><circle cx="8" cy="8" r="3.4" stroke-width="1.8" stroke="#e6e5e6"/></g></svg>
  <div class="tf" style="left:148.5px;top:512.5px;width:44px;height:15px"></div>
  <div class="stp" style="left:195px;top:511.5px;height:17px"></div>
  <svg class="abs" style="left:197px;top:514.5px" width="6" height="11" viewBox="0 0 6 11"><path d="M1 3.6L3 1.4l2 2.2M1 7.4L3 9.6l2-2.2" fill="none" stroke="#6e6d6e" stroke-width="1" stroke-linecap="round" stroke-linejoin="round"/></svg>

  <!-- layers -->
  <div class="abs" style="left:0;top:552px;width:218px;height:2px;background:#1f1e1f"></div>
  <svg class="abs" style="left:76px;top:559px" width="18" height="17" viewBox="0 0 18 17"><g fill="none" stroke="#3f7ae0" stroke-width="1.3" stroke-linejoin="round"><path d="M9 1L16.5 5L9 9L1.5 5Z"/><path d="M1.5 8.2L9 12.2l7.5-4"/><path d="M1.5 11.4L9 15.4l7.5-4"/></g></svg>
  <svg class="abs" style="left:120px;top:559px" width="18" height="17" viewBox="0 0 18 17"><path d="M5 .5v16M9.5 .5v16M14 .5v16M.5 4h17M.5 8.500000000000002h17M.5 13h17" fill="none" stroke="#a09fa0" stroke-width="1.1"/></svg>
  <div class="abs" style="left:0;top:583.5px;width:218px;height:1px;background:#454445"></div>
  <div class="abs" style="left:10px;top:589px;width:197.5px;height:21.5px;background:#474647;border-radius:5px"></div>
  <div class="abs" style="left:17.5px;top:591.8px;font-size:11.7px;color:#c4c3c4;letter-spacing:-.1px">Foreground</div>
  <svg class="abs" style="left:101.5px;top:593.5px" width="11.5" height="11.5" viewBox="0 0 14 14"><path d="M9.5 1.500000000000001c.8 -.8 2 -.8 2.8 0s.8 2 0 2.8L5 11.6L1.500000000000001 12.500000000000002L2.4 9Z M8.500000000000002 2.8L11.2 5.500000000000001" fill="none" stroke="#f0f0f0" stroke-width="1.6" stroke-linejoin="round"/></svg>
  <svg class="abs" style="left:138px;top:595.5px" width="12.5" height="8.1" viewBox="0 0 17 11"><path d="M.8 5.500000000000001C4 -.4 13 -.4 16.2 5.500000000000001C13 11.4 4 11.4 .8 5.500000000000001Z" fill="none" stroke="#f0f0f0" stroke-width="1.6"/><circle cx="8.500000000000002" cy="5.500000000000001" r="2.2" fill="none" stroke="#f0f0f0" stroke-width="1.6"/></svg>
  <svg class="abs" style="left:174.5px;top:593.5px" width="12.5" height="11.7" viewBox="0 0 15 14"><g fill="none" stroke="#f0f0f0" stroke-width="1.6" stroke-linejoin="round"><path d="M4 4V1h7v3"/><rect x=".8" y="4" width="13.4" height="6.5" rx="1.500000000000001"/><rect x="4" y="8" width="7" height="5.2" fill="#474647"/></g></svg>
  <div class="abs" style="left:17.5px;top:614px;font-size:11.7px;color:#f4f4f4;letter-spacing:-.1px;text-shadow:.3px 0 0 #f4f4f4">Background</div>
  <svg class="abs" style="left:138px;top:617.5px" width="12.5" height="8.1" viewBox="0 0 17 11"><path d="M.8 5.500000000000001C4 -.4 13 -.4 16.2 5.500000000000001C13 11.4 4 11.4 .8 5.500000000000001Z" fill="none" stroke="#5a595a" stroke-width="1.5"/><circle cx="8.500000000000002" cy="5.500000000000001" r="2.2" fill="none" stroke="#5a595a" stroke-width="1.5"/></svg>
  <svg class="abs" style="left:174.5px;top:615.5px" width="12.5" height="11.7" viewBox="0 0 15 14"><g fill="none" stroke="#5a595a" stroke-width="1.5" stroke-linejoin="round"><path d="M4 4V1h7v3"/><rect x=".8" y="4" width="13.4" height="6.5" rx="1.500000000000001"/><rect x="4" y="8" width="7" height="5.2" fill="#323132"/></g></svg>
  <svg class="abs" style="left:7px;top:736px" width="12" height="12" viewBox="0 0 12 12"><path d="M6 .5v11M.5 6h11" stroke="#6f6e6f" stroke-width="1.1"/></svg>
  <svg class="abs" style="left:31px;top:741px" width="12" height="2" viewBox="0 0 12 2"><path d="M.5 1h11" stroke="#5f5e5f" stroke-width="1.1"/></svg>
</div>

<style>
.menu{position:absolute;background:#504f50;border-radius:6.5px;box-shadow:0 0 0 .5px rgba(40,40,40,.6),0 3px 9px rgba(0,0,0,.22)}
.mi{position:absolute;font-size:11.8px;color:#f1f1f1;white-space:nowrap;letter-spacing:-.2px;line-height:14px;-webkit-text-stroke:.2px #f1f1f1}
.msep{position:absolute;left:11.500000000000002px;width:141px;height:1px;background:#6a696a}
</style>
<div class="menu" style="left:684px;top:408.5px;width:164px;height:260.5px">
  <div class="abs" style="left:4.5px;top:107px;width:155px;height:19px;background:#636263;border-radius:4px"></div>
  <div class="mi" style="left:11.5px;top:7.5px">Cut</div>
  <div class="mi" style="left:11.5px;top:26px">Copy</div>
  <div class="mi" style="left:11.5px;top:44.5px">Paste</div>
  <div class="mi" style="left:11.5px;top:63px">Paste and Match Style</div>
  <div class="mi" style="left:11.5px;top:82px">Delete</div>
  <div class="msep" style="top:102px"></div>
  <div class="mi" style="left:11.5px;top:109.5px">Order</div>
  <div class="mi" style="left:11.5px;top:128.5px">Move to Layer</div>
  <div class="mi" style="left:11.5px;top:147px">Rotate 90° Left</div>
  <div class="mi" style="left:11.5px;top:165.5px">Rotate 90° Right</div>
  <div class="msep" style="top:186.5px"></div>
  <div class="mi" style="left:11.5px;top:193.5px">Crop</div>
  <div class="mi" style="left:11.5px;top:212px">Original Size</div>
  <div class="msep" style="top:233px"></div>
  <div class="mi" style="left:11.5px;top:240.5px">Edit Image...</div>
  <svg class="abs" style="left:146px;top:112px" width="6" height="9" viewBox="0 0 6 9"><path d="M1 1l3.500000000000001 3.500000000000001L1 8" fill="none" stroke="#f1f1f1" stroke-width="1.4" stroke-linecap="round" stroke-linejoin="round"/></svg>
  <svg class="abs" style="left:146px;top:131px" width="6" height="9" viewBox="0 0 6 9"><path d="M1 1l3.500000000000001 3.500000000000001L1 8" fill="none" stroke="#f1f1f1" stroke-width="1.4" stroke-linecap="round" stroke-linejoin="round"/></svg>
</div>
<div class="menu" style="left:848.5px;top:512px;width:102px;height:83.5px">
  <div class="abs" style="left:3px;top:41px;width:96px;height:20px;background:#4a85e2;border:1.500000000000001px solid #d63fb9;border-radius:4.5px"></div>
  <div class="mi" style="left:11px;top:7px">Bring Forward</div>
  <div class="mi" style="left:11px;top:25.5px">Bring to Front</div>
  <div class="mi" style="left:11px;top:44.5px;color:#fff">Send Backward</div>
  <div class="mi" style="left:11px;top:63px">Send to Back</div>
</div>

</div>
</body></html>
